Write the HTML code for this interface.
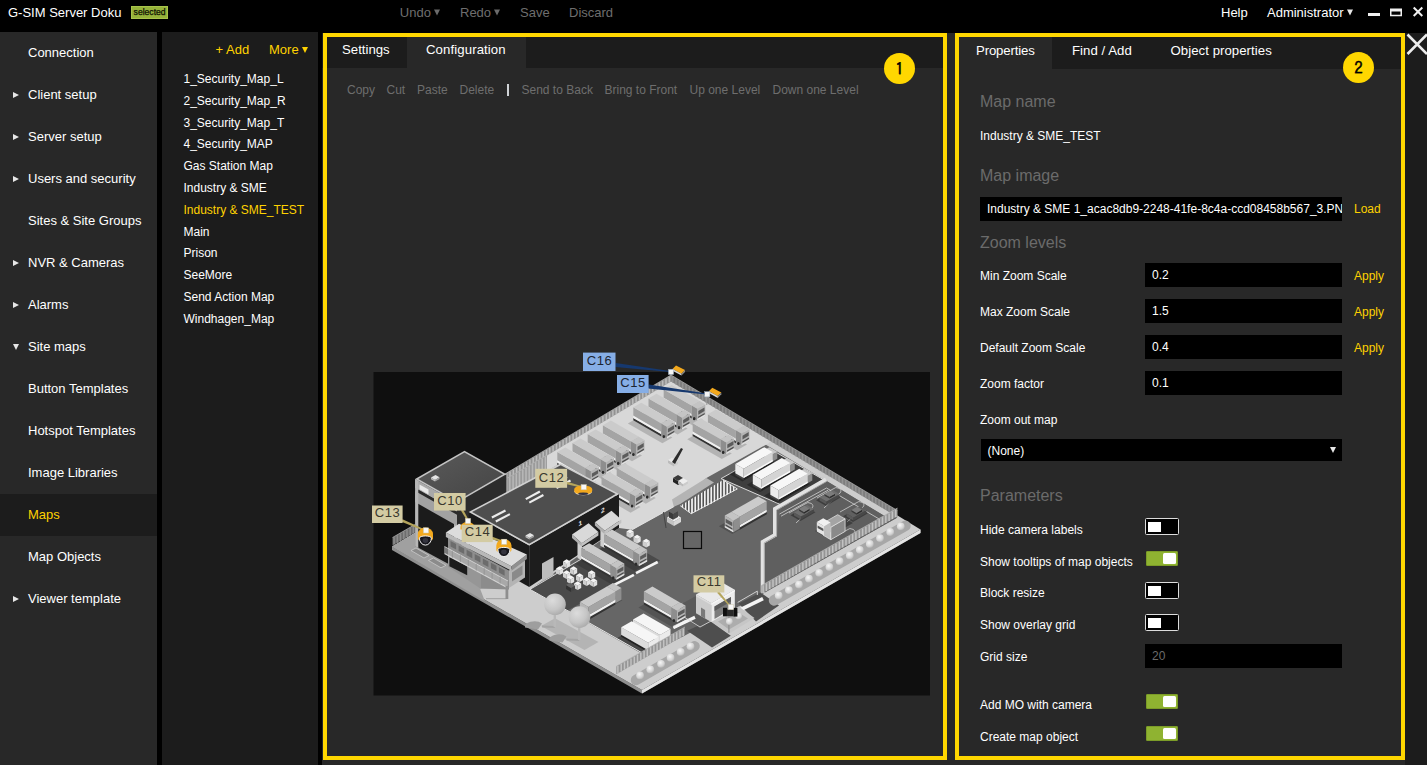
<!DOCTYPE html>
<html lang="en">
<head>
<meta charset="utf-8">
<title>G-SIM Server Doku</title>
<style>
*{box-sizing:border-box;margin:0;padding:0}
html,body{width:1427px;height:765px;overflow:hidden;background:#000}
body{font-family:"Liberation Sans",Arial,sans-serif;color:#fff;font-size:13px;position:relative}
.abs{position:absolute}
.t{position:absolute;white-space:nowrap;line-height:1}
#topbar{position:absolute;left:0;top:0;width:1427px;height:33px;background:#000}
#side{position:absolute;left:0;top:33px;width:157px;height:732px;background:#282828;box-shadow:0 -1px 0 #282828}
#list{position:absolute;left:162px;top:33px;width:155.5px;height:732px;background:#1c1c1c;box-shadow:0 -1px 0 #1c1c1c}
#center{position:absolute;left:322px;top:33px;width:633px;height:732px;background:#282828}
#right{position:absolute;left:955px;top:33px;width:450px;height:732px;background:#282828}
#far{position:absolute;left:1405px;top:33px;width:22px;height:732px;background:#1c1c1c}
.yb{position:absolute;border:4px solid #FFD700;pointer-events:none}
.nav{position:absolute;left:28px;font-size:13px;white-space:nowrap;line-height:16px;height:16px}
.arr{position:absolute;left:12px;width:0;height:0;border-style:solid}
.arr.r{border-width:3.5px 0 3.5px 6px;border-color:transparent transparent transparent #e6e6e6}
.arr.d{border-width:6px 3.5px 0 3.5px;border-color:#e6e6e6 transparent transparent transparent}
.li{position:absolute;left:183.5px;font-size:12px;white-space:nowrap;line-height:14px;height:14px}
.y{color:#FFD200}
.g{color:#6e6e6e}
.tab{position:absolute;font-size:13.2px;line-height:16px;white-space:nowrap}
.lbl{position:absolute;left:980px;font-size:12px;line-height:14px;white-space:nowrap}
.hd{position:absolute;left:980px;font-size:16px;line-height:18px;color:#6b6b6b;white-space:nowrap}
.inp{position:absolute;background:#000;font-size:12px;line-height:14px;color:#fff;white-space:nowrap;overflow:hidden}
.tog{position:absolute;left:1145px;width:34px;height:16px}
.circ{position:absolute;width:31px;height:31px;border-radius:50%;background:#FFD700;color:#000;font-family:"IPAGothic","Liberation Sans",sans-serif;font-size:17px;-webkit-text-stroke:.45px #000;text-align:center;line-height:31px}
</style>
</head>
<body>
<div id="topbar">
  <div class="t" style="left:8px;top:6px;font-size:13px">G-SIM Server Doku</div>
  <div class="abs" style="left:131px;top:6px;width:37px;height:13px;background:#96b23a;border:1px solid #a8c44a"></div>
  <div class="t" style="left:133.6px;top:7.5px;font-size:8.6px;color:#0c1002;-webkit-text-stroke:.25px #0c1002">selected</div>
  <div class="t g" style="left:399.8px;top:6px;font-size:13px">Undo</div>
  <div class="t g" style="left:460px;top:6px;font-size:13px">Redo</div>
  <div class="t g" style="left:520px;top:6px;font-size:13px">Save</div>
  <div class="t g" style="left:569px;top:6px;font-size:13px">Discard</div>
  <div class="t" style="left:1221px;top:6px;font-size:13px">Help</div>
  <div class="t" style="left:1267px;top:6px;font-size:13px">Administrator</div>
  <svg class="abs" style="left:0;top:0" width="1427" height="33" viewBox="0 0 1427 33">
    <polygon points="434,9.5 440,9.5 437,15.5" fill="#6b6b6b"/>
    <polygon points="494,9.5 500,9.5 497,15.5" fill="#6b6b6b"/>
    <polygon points="1347,9.5 1353,9.5 1350,15.5" fill="#e6e6e6"/>
    <rect x="1368" y="13" width="12" height="3" fill="#f0f0f0"/>
    <rect x="1390.75" y="10" width="10.5" height="5.5" fill="none" stroke="#f0f0f0" stroke-width="1.5"/>
    <rect x="1390" y="8.5" width="12" height="3" fill="#f0f0f0"/>
    <path d="M1413.7 7.5 L1422.3 16 M1422.3 7.5 L1413.7 16" stroke="#f0f0f0" stroke-width="2" fill="none"/>
  </svg>
</div>
<div id="side">
<div class="abs" style="left:0;top:461px;width:157px;height:42px;background:#1c1c1c"></div>
<div class="nav" style="top:11.8px">Connection</div>
<div class="nav" style="top:53.8px">Client setup</div>
<div class="arr r" style="top:59.1px;left:13px"></div>
<div class="nav" style="top:95.8px">Server setup</div>
<div class="arr r" style="top:101.1px;left:13px"></div>
<div class="nav" style="top:137.8px">Users and security</div>
<div class="arr r" style="top:143.1px;left:13px"></div>
<div class="nav" style="top:179.8px">Sites &amp; Site Groups</div>
<div class="nav" style="top:221.8px">NVR &amp; Cameras</div>
<div class="arr r" style="top:227.1px;left:13px"></div>
<div class="nav" style="top:263.8px">Alarms</div>
<div class="arr r" style="top:269.1px;left:13px"></div>
<div class="nav" style="top:305.8px">Site maps</div>
<div class="arr d" style="top:310.8px;left:12.8px"></div>
<div class="nav" style="top:347.8px">Button Templates</div>
<div class="nav" style="top:389.8px">Hotspot Templates</div>
<div class="nav" style="top:431.8px">Image Libraries</div>
<div class="nav y" style="top:473.8px">Maps</div>
<div class="nav" style="top:515.8px">Map Objects</div>
<div class="nav" style="top:557.8px">Viewer template</div>
<div class="arr r" style="top:563.1px;left:13px"></div>
</div>
<div id="list">
<div class="t y" style="left:53.5px;top:9.5px;font-size:13px">+ Add</div>
<div class="t y" style="left:107px;top:9.5px;font-size:13px">More</div>
<div class="arr d" style="left:140px;top:13.5px;border-width:6px 3px 0 3px;border-color:#FFD200 transparent transparent transparent"></div>
<div class="li" style="left:21.5px;top:39px">1_Security_Map_L</div>
<div class="li" style="left:21.5px;top:61px">2_Security_Map_R</div>
<div class="li" style="left:21.5px;top:83px">3_Security_Map_T</div>
<div class="li" style="left:21.5px;top:104px">4_Security_MAP</div>
<div class="li" style="left:21.5px;top:126px">Gas Station Map</div>
<div class="li" style="left:21.5px;top:148px">Industry &amp; SME</div>
<div class="li y" style="left:21.5px;top:170px">Industry &amp; SME_TEST</div>
<div class="li" style="left:21.5px;top:192px">Main</div>
<div class="li" style="left:21.5px;top:213px">Prison</div>
<div class="li" style="left:21.5px;top:235px">SeeMore</div>
<div class="li" style="left:21.5px;top:257px">Send Action Map</div>
<div class="li" style="left:21.5px;top:279px">Windhagen_Map</div>
</div>
<div id="center">
  <div class="abs" style="left:0;top:0;width:625px;height:35px;background:#1c1c1c"></div>
  <div class="abs" style="left:85px;top:0;width:119px;height:35px;background:#282828"></div>
  <div class="tab" style="left:20px;top:9px">Settings</div>
  <div class="tab" style="left:104px;top:9px;letter-spacing:.1px">Configuration</div>
  <div class="lbl g" style="left:25px;top:50px">Copy</div>
  <div class="lbl g" style="left:64.5px;top:50px">Cut</div>
  <div class="lbl g" style="left:95px;top:50px">Paste</div>
  <div class="lbl g" style="left:137.5px;top:50px">Delete</div>
  <div class="abs" style="left:184.5px;top:51px;width:2px;height:12px;background:#cfd3d6"></div>
  <div class="lbl g" style="left:199.5px;top:50px">Send to Back</div>
  <div class="lbl g" style="left:282.5px;top:50px">Bring to Front</div>
  <div class="lbl g" style="left:367.5px;top:50px">Up one Level</div>
  <div class="lbl g" style="left:450.5px;top:50px">Down one Level</div>
  <!--MAPSTART--><svg class="abs" style="left:38px;top:307px" width="580" height="365" viewBox="360 340 580 365">
<defs>
<radialGradient id="sph" cx=".4" cy=".35" r=".75"><stop offset="0" stop-color="#f6f6f6"/><stop offset=".6" stop-color="#d4d4d4"/><stop offset="1" stop-color="#a8a8a8"/></radialGradient>
<radialGradient id="sph2" cx=".38" cy=".32" r=".8"><stop offset="0" stop-color="#dcdcdc"/><stop offset=".55" stop-color="#c6c6c6"/><stop offset="1" stop-color="#a2a2a2"/></radialGradient>
<linearGradient id="roofg" x1="0" y1="0" x2="1" y2="1"><stop offset="0" stop-color="#5a5a5a"/><stop offset="1" stop-color="#444"/></linearGradient>
<pattern id="hatch" width="3.2" height="10" patternUnits="userSpaceOnUse"><rect width="3.2" height="10" fill="#4c4c4c"/><rect width="1.7" height="10" fill="#f2f2f2"/></pattern>
</defs>
<rect x="373.5" y="372" width="556.5" height="323.5" fill="#0f0f0f"/>
<polygon points="392.0,546.5 642.0,690.0 920.5,529.5 920.5,533.0 642.0,693.5 392.0,550.0" fill="#8f8f8f"/>
<polygon points="642.0,690.0 920.5,529.5 920.5,533.0 642.0,693.5" fill="#e4e4e4"/>
<polygon points="392.0,546.5 671.0,377.5 920.5,529.5 642.0,690.0" fill="#cdcdcd"/>
<polygon points="392.0,546.5 415.0,533.0 448.0,552.0 509.0,588.0 480.0,588.4 485.0,601.5 499.0,609.5" fill="#a0a0a0"/>
<polygon points="530.0,589.4 619.0,528.0 671.0,388.0 771.0,447.8 883.3,515.3 897.4,517.5 761.4,594.5 685.0,635.5 645.0,655.5" fill="#666666"/>
<polygon points="671.0,381.0 771.0,440.0 768.7,443.2 706.4,478.1 673.8,506.7 632.2,529.7 619.0,528.0 560.0,496.0 505.0,480.0 505.0,474.0" fill="#d8d8d8"/>
<polygon points="672.0,499.5 706.4,478.1 714.0,482.5 680.2,504.1 673.8,506.7" fill="#b4b4b4"/>
<polygon points="530.0,589.4 619.0,537.0 660.0,560.5 567.4,610.5" fill="#4a4a4a"/>
<polygon points="721.1,478.6 772.0,450.0 824.1,480.0 781.5,505.0" fill="#3e3e3e" stroke="#e8e8e8" stroke-width="0.9"/>
<polygon points="700.0,493.8 723.0,480.0 737.3,488.9 711.8,503.6 691.2,513.7 680.2,505.7" fill="url(#hatch)"/>
<polyline points="680.2,505.7 691.2,513.7 737.3,488.9 723.0,480.0" fill="none" stroke="#f0f0f0" stroke-width=".9"/>
<polygon points="781.5,505.0 825.9,480.5 883.3,515.3 897.4,517.5 765.0,592.0 765.0,543.0 777.0,536.0" fill="#5f5f5f"/>
<line x1="779.5" y1="514.0" x2="826.5" y2="488.0" stroke="#d4d4d4" stroke-width="0.8" />
<line x1="781.0" y1="516.2" x2="828.0" y2="490.2" stroke="#d4d4d4" stroke-width="0.8" />
<line x1="826.5" y1="488.0" x2="880.0" y2="519.5" stroke="#d4d4d4" stroke-width="0.8" />
<path d="M789.0 513.0 L805.0 504.0 a4 3 0 0 1 7 4 L796.0 523.0" fill="none" stroke="#cfcfcf" stroke-width="0.8"/>
<path d="M817.0 498.0 L833.0 489.0 a4 3 0 0 1 7 4 L824.0 508.0" fill="none" stroke="#cfcfcf" stroke-width="0.8"/>
<path d="M840.0 512.0 L856.0 503.0 a4 3 0 0 1 7 4 L847.0 522.0" fill="none" stroke="#cfcfcf" stroke-width="0.8"/>
<path d="M831.0 539.0 L847.0 530.0 a4 3 0 0 1 7 4 L838.0 549.0" fill="none" stroke="#cfcfcf" stroke-width="0.8"/>
<polyline points="826.0,479.6 775.0,508.9 775.0,535.0 762.7,542.0 762.7,593.0" fill="none" stroke="#e2e2e2" stroke-width="4" stroke-linejoin="miter"/>
<polyline points="827.4,481.0 776.6,510.0 776.6,535.8 764.3,542.8 764.3,592.4" fill="none" stroke="#a2a2a2" stroke-width="0.9"/>
<line x1="632.2" y1="529.7" x2="673.8" y2="506.7" stroke="#e6e6e6" stroke-width="0.9" />
<line x1="530.0" y1="589.4" x2="583.0" y2="558.0" stroke="#e0e0e0" stroke-width="0.9" />
<line x1="612.6" y1="585.6" x2="633.9" y2="574.9" stroke="#f4f4f4" stroke-width="2.6" />
<line x1="636.0" y1="573.2" x2="657.7" y2="562.0" stroke="#f4f4f4" stroke-width="2.6" />
<line x1="673.3" y1="627.7" x2="695.9" y2="616.5" stroke="#f4f4f4" stroke-width="2.6" />
<line x1="743.0" y1="609.0" x2="760.0" y2="601.0" stroke="#f4f4f4" stroke-width="2.6" />
<polygon points="687.2,630.8 709.3,620.5 730.8,635.8 712.0,647.5" fill="#4e4e4e"/>
<polygon points="738.7,603.4 760.5,592.5 779.0,605.5 756.0,621.5" fill="#4e4e4e"/>
<polygon points="682.3,603.4 696.0,596.0 696.0,613.5 711.2,621.0 700.0,628.0 672.0,611.0" fill="#5a5a5a"/>
<line x1="673.5" y1="627.5" x2="695.0" y2="617.3" stroke="#f4f4f4" stroke-width="3.2" />
<line x1="741.5" y1="609.2" x2="763.0" y2="598.6" stroke="#f4f4f4" stroke-width="3.6" />
<polyline points="682.3,603.4 672.0,609.5 700.0,627.0 711.2,621.0" fill="none" stroke="#e0e0e0" stroke-width=".8"/>
<polygon points="711.2,621.0 738.7,606.5 754.5,618.0 728.9,633.8" fill="#c6c6c6"/>
<polygon points="718.0,621.5 737.0,611.5 748.0,618.5 729.0,629.5" fill="#adadad"/>
<polygon points="505.0,480.5 671.0,381.5 671.0,375.0 505.0,474.0" fill="#929292"/>
<line x1="506.7" y1="479.5" x2="506.7" y2="473.6" stroke="#bcbcbc" stroke-width="1.5" />
<line x1="510.0" y1="477.5" x2="510.0" y2="471.6" stroke="#bcbcbc" stroke-width="1.5" />
<line x1="513.3" y1="475.6" x2="513.3" y2="469.7" stroke="#bcbcbc" stroke-width="1.5" />
<line x1="516.6" y1="473.6" x2="516.6" y2="467.7" stroke="#bcbcbc" stroke-width="1.5" />
<line x1="519.9" y1="471.6" x2="519.9" y2="465.7" stroke="#bcbcbc" stroke-width="1.5" />
<line x1="523.3" y1="469.6" x2="523.3" y2="463.7" stroke="#bcbcbc" stroke-width="1.5" />
<line x1="526.6" y1="467.6" x2="526.6" y2="461.7" stroke="#bcbcbc" stroke-width="1.5" />
<line x1="529.9" y1="465.6" x2="529.9" y2="459.8" stroke="#bcbcbc" stroke-width="1.5" />
<line x1="533.2" y1="463.7" x2="533.2" y2="457.8" stroke="#bcbcbc" stroke-width="1.5" />
<line x1="536.5" y1="461.7" x2="536.5" y2="455.8" stroke="#bcbcbc" stroke-width="1.5" />
<line x1="539.9" y1="459.7" x2="539.9" y2="453.8" stroke="#bcbcbc" stroke-width="1.5" />
<line x1="543.2" y1="457.7" x2="543.2" y2="451.8" stroke="#bcbcbc" stroke-width="1.5" />
<line x1="546.5" y1="455.8" x2="546.5" y2="449.9" stroke="#bcbcbc" stroke-width="1.5" />
<line x1="549.8" y1="453.8" x2="549.8" y2="447.9" stroke="#bcbcbc" stroke-width="1.5" />
<line x1="553.1" y1="451.8" x2="553.1" y2="445.9" stroke="#bcbcbc" stroke-width="1.5" />
<line x1="556.5" y1="449.8" x2="556.5" y2="443.9" stroke="#bcbcbc" stroke-width="1.5" />
<line x1="559.8" y1="447.8" x2="559.8" y2="441.9" stroke="#bcbcbc" stroke-width="1.5" />
<line x1="563.1" y1="445.9" x2="563.1" y2="440.0" stroke="#bcbcbc" stroke-width="1.5" />
<line x1="566.4" y1="443.9" x2="566.4" y2="438.0" stroke="#bcbcbc" stroke-width="1.5" />
<line x1="569.7" y1="441.9" x2="569.7" y2="436.0" stroke="#bcbcbc" stroke-width="1.5" />
<line x1="573.1" y1="439.9" x2="573.1" y2="434.0" stroke="#bcbcbc" stroke-width="1.5" />
<line x1="576.4" y1="437.9" x2="576.4" y2="432.0" stroke="#bcbcbc" stroke-width="1.5" />
<line x1="579.7" y1="435.9" x2="579.7" y2="430.1" stroke="#bcbcbc" stroke-width="1.5" />
<line x1="583.0" y1="434.0" x2="583.0" y2="428.1" stroke="#bcbcbc" stroke-width="1.5" />
<line x1="586.3" y1="432.0" x2="586.3" y2="426.1" stroke="#bcbcbc" stroke-width="1.5" />
<line x1="589.7" y1="430.0" x2="589.7" y2="424.1" stroke="#bcbcbc" stroke-width="1.5" />
<line x1="593.0" y1="428.0" x2="593.0" y2="422.1" stroke="#bcbcbc" stroke-width="1.5" />
<line x1="596.3" y1="426.1" x2="596.3" y2="420.2" stroke="#bcbcbc" stroke-width="1.5" />
<line x1="599.6" y1="424.1" x2="599.6" y2="418.2" stroke="#bcbcbc" stroke-width="1.5" />
<line x1="602.9" y1="422.1" x2="602.9" y2="416.2" stroke="#bcbcbc" stroke-width="1.5" />
<line x1="606.3" y1="420.1" x2="606.3" y2="414.2" stroke="#bcbcbc" stroke-width="1.5" />
<line x1="609.6" y1="418.1" x2="609.6" y2="412.2" stroke="#bcbcbc" stroke-width="1.5" />
<line x1="612.9" y1="416.1" x2="612.9" y2="410.2" stroke="#bcbcbc" stroke-width="1.5" />
<line x1="616.2" y1="414.2" x2="616.2" y2="408.3" stroke="#bcbcbc" stroke-width="1.5" />
<line x1="619.5" y1="412.2" x2="619.5" y2="406.3" stroke="#bcbcbc" stroke-width="1.5" />
<line x1="622.9" y1="410.2" x2="622.9" y2="404.3" stroke="#bcbcbc" stroke-width="1.5" />
<line x1="626.2" y1="408.2" x2="626.2" y2="402.3" stroke="#bcbcbc" stroke-width="1.5" />
<line x1="629.5" y1="406.2" x2="629.5" y2="400.4" stroke="#bcbcbc" stroke-width="1.5" />
<line x1="632.8" y1="404.3" x2="632.8" y2="398.4" stroke="#bcbcbc" stroke-width="1.5" />
<line x1="636.1" y1="402.3" x2="636.1" y2="396.4" stroke="#bcbcbc" stroke-width="1.5" />
<line x1="639.5" y1="400.3" x2="639.5" y2="394.4" stroke="#bcbcbc" stroke-width="1.5" />
<line x1="642.8" y1="398.3" x2="642.8" y2="392.4" stroke="#bcbcbc" stroke-width="1.5" />
<line x1="646.1" y1="396.4" x2="646.1" y2="390.5" stroke="#bcbcbc" stroke-width="1.5" />
<line x1="649.4" y1="394.4" x2="649.4" y2="388.5" stroke="#bcbcbc" stroke-width="1.5" />
<line x1="652.7" y1="392.4" x2="652.7" y2="386.5" stroke="#bcbcbc" stroke-width="1.5" />
<line x1="656.1" y1="390.4" x2="656.1" y2="384.5" stroke="#bcbcbc" stroke-width="1.5" />
<line x1="659.4" y1="388.4" x2="659.4" y2="382.5" stroke="#bcbcbc" stroke-width="1.5" />
<line x1="662.7" y1="386.4" x2="662.7" y2="380.6" stroke="#bcbcbc" stroke-width="1.5" />
<line x1="666.0" y1="384.5" x2="666.0" y2="378.6" stroke="#bcbcbc" stroke-width="1.5" />
<line x1="669.3" y1="382.5" x2="669.3" y2="376.6" stroke="#bcbcbc" stroke-width="1.5" />
<line x1="505.0" y1="474.0" x2="671.0" y2="375.0" stroke="#b8b8b8" stroke-width="0.7" />
<polygon points="671.0,381.5 897.4,517.0 897.4,510.5 671.0,375.0" fill="#7e7e7e"/>
<line x1="672.7" y1="382.5" x2="672.7" y2="376.6" stroke="#949494" stroke-width="1.5" />
<line x1="676.0" y1="384.5" x2="676.0" y2="378.6" stroke="#949494" stroke-width="1.5" />
<line x1="679.3" y1="386.5" x2="679.3" y2="380.6" stroke="#949494" stroke-width="1.5" />
<line x1="682.7" y1="388.5" x2="682.7" y2="382.6" stroke="#949494" stroke-width="1.5" />
<line x1="686.0" y1="390.5" x2="686.0" y2="384.6" stroke="#949494" stroke-width="1.5" />
<line x1="689.3" y1="392.5" x2="689.3" y2="386.6" stroke="#949494" stroke-width="1.5" />
<line x1="692.6" y1="394.5" x2="692.6" y2="388.6" stroke="#949494" stroke-width="1.5" />
<line x1="696.0" y1="396.4" x2="696.0" y2="390.5" stroke="#949494" stroke-width="1.5" />
<line x1="699.3" y1="398.4" x2="699.3" y2="392.5" stroke="#949494" stroke-width="1.5" />
<line x1="702.6" y1="400.4" x2="702.6" y2="394.5" stroke="#949494" stroke-width="1.5" />
<line x1="706.0" y1="402.4" x2="706.0" y2="396.5" stroke="#949494" stroke-width="1.5" />
<line x1="709.3" y1="404.4" x2="709.3" y2="398.5" stroke="#949494" stroke-width="1.5" />
<line x1="712.6" y1="406.4" x2="712.6" y2="400.5" stroke="#949494" stroke-width="1.5" />
<line x1="715.9" y1="408.4" x2="715.9" y2="402.5" stroke="#949494" stroke-width="1.5" />
<line x1="719.3" y1="410.4" x2="719.3" y2="404.5" stroke="#949494" stroke-width="1.5" />
<line x1="722.6" y1="412.4" x2="722.6" y2="406.5" stroke="#949494" stroke-width="1.5" />
<line x1="725.9" y1="414.4" x2="725.9" y2="408.5" stroke="#949494" stroke-width="1.5" />
<line x1="729.3" y1="416.4" x2="729.3" y2="410.5" stroke="#949494" stroke-width="1.5" />
<line x1="732.6" y1="418.4" x2="732.6" y2="412.5" stroke="#949494" stroke-width="1.5" />
<line x1="735.9" y1="420.4" x2="735.9" y2="414.5" stroke="#949494" stroke-width="1.5" />
<line x1="739.3" y1="422.3" x2="739.3" y2="416.4" stroke="#949494" stroke-width="1.5" />
<line x1="742.6" y1="424.3" x2="742.6" y2="418.4" stroke="#949494" stroke-width="1.5" />
<line x1="745.9" y1="426.3" x2="745.9" y2="420.4" stroke="#949494" stroke-width="1.5" />
<line x1="749.2" y1="428.3" x2="749.2" y2="422.4" stroke="#949494" stroke-width="1.5" />
<line x1="752.6" y1="430.3" x2="752.6" y2="424.4" stroke="#949494" stroke-width="1.5" />
<line x1="755.9" y1="432.3" x2="755.9" y2="426.4" stroke="#949494" stroke-width="1.5" />
<line x1="759.2" y1="434.3" x2="759.2" y2="428.4" stroke="#949494" stroke-width="1.5" />
<line x1="762.6" y1="436.3" x2="762.6" y2="430.4" stroke="#949494" stroke-width="1.5" />
<line x1="765.9" y1="438.3" x2="765.9" y2="432.4" stroke="#949494" stroke-width="1.5" />
<line x1="769.2" y1="440.3" x2="769.2" y2="434.4" stroke="#949494" stroke-width="1.5" />
<line x1="772.5" y1="442.3" x2="772.5" y2="436.4" stroke="#949494" stroke-width="1.5" />
<line x1="775.9" y1="444.3" x2="775.9" y2="438.4" stroke="#949494" stroke-width="1.5" />
<line x1="779.2" y1="446.3" x2="779.2" y2="440.4" stroke="#949494" stroke-width="1.5" />
<line x1="782.5" y1="448.3" x2="782.5" y2="442.4" stroke="#949494" stroke-width="1.5" />
<line x1="785.9" y1="450.2" x2="785.9" y2="444.3" stroke="#949494" stroke-width="1.5" />
<line x1="789.2" y1="452.2" x2="789.2" y2="446.3" stroke="#949494" stroke-width="1.5" />
<line x1="792.5" y1="454.2" x2="792.5" y2="448.3" stroke="#949494" stroke-width="1.5" />
<line x1="795.9" y1="456.2" x2="795.9" y2="450.3" stroke="#949494" stroke-width="1.5" />
<line x1="799.2" y1="458.2" x2="799.2" y2="452.3" stroke="#949494" stroke-width="1.5" />
<line x1="802.5" y1="460.2" x2="802.5" y2="454.3" stroke="#949494" stroke-width="1.5" />
<line x1="805.8" y1="462.2" x2="805.8" y2="456.3" stroke="#949494" stroke-width="1.5" />
<line x1="809.2" y1="464.2" x2="809.2" y2="458.3" stroke="#949494" stroke-width="1.5" />
<line x1="812.5" y1="466.2" x2="812.5" y2="460.3" stroke="#949494" stroke-width="1.5" />
<line x1="815.8" y1="468.2" x2="815.8" y2="462.3" stroke="#949494" stroke-width="1.5" />
<line x1="819.2" y1="470.2" x2="819.2" y2="464.3" stroke="#949494" stroke-width="1.5" />
<line x1="822.5" y1="472.2" x2="822.5" y2="466.3" stroke="#949494" stroke-width="1.5" />
<line x1="825.8" y1="474.2" x2="825.8" y2="468.3" stroke="#949494" stroke-width="1.5" />
<line x1="829.1" y1="476.2" x2="829.1" y2="470.3" stroke="#949494" stroke-width="1.5" />
<line x1="832.5" y1="478.1" x2="832.5" y2="472.2" stroke="#949494" stroke-width="1.5" />
<line x1="835.8" y1="480.1" x2="835.8" y2="474.2" stroke="#949494" stroke-width="1.5" />
<line x1="839.1" y1="482.1" x2="839.1" y2="476.2" stroke="#949494" stroke-width="1.5" />
<line x1="842.5" y1="484.1" x2="842.5" y2="478.2" stroke="#949494" stroke-width="1.5" />
<line x1="845.8" y1="486.1" x2="845.8" y2="480.2" stroke="#949494" stroke-width="1.5" />
<line x1="849.1" y1="488.1" x2="849.1" y2="482.2" stroke="#949494" stroke-width="1.5" />
<line x1="852.5" y1="490.1" x2="852.5" y2="484.2" stroke="#949494" stroke-width="1.5" />
<line x1="855.8" y1="492.1" x2="855.8" y2="486.2" stroke="#949494" stroke-width="1.5" />
<line x1="859.1" y1="494.1" x2="859.1" y2="488.2" stroke="#949494" stroke-width="1.5" />
<line x1="862.4" y1="496.1" x2="862.4" y2="490.2" stroke="#949494" stroke-width="1.5" />
<line x1="865.8" y1="498.1" x2="865.8" y2="492.2" stroke="#949494" stroke-width="1.5" />
<line x1="869.1" y1="500.1" x2="869.1" y2="494.2" stroke="#949494" stroke-width="1.5" />
<line x1="872.4" y1="502.1" x2="872.4" y2="496.2" stroke="#949494" stroke-width="1.5" />
<line x1="875.8" y1="504.0" x2="875.8" y2="498.1" stroke="#949494" stroke-width="1.5" />
<line x1="879.1" y1="506.0" x2="879.1" y2="500.1" stroke="#949494" stroke-width="1.5" />
<line x1="882.4" y1="508.0" x2="882.4" y2="502.1" stroke="#949494" stroke-width="1.5" />
<line x1="885.7" y1="510.0" x2="885.7" y2="504.1" stroke="#949494" stroke-width="1.5" />
<line x1="889.1" y1="512.0" x2="889.1" y2="506.1" stroke="#949494" stroke-width="1.5" />
<line x1="892.4" y1="514.0" x2="892.4" y2="508.1" stroke="#949494" stroke-width="1.5" />
<line x1="895.7" y1="516.0" x2="895.7" y2="510.1" stroke="#949494" stroke-width="1.5" />
<line x1="671.0" y1="375.0" x2="897.4" y2="510.5" stroke="#b8b8b8" stroke-width="0.7" />
<polygon points="505.0,495.0 547.0,470.5 547.0,455.0 505.0,479.5" fill="#9a9a9a"/>
<line x1="506.6" y1="494.1" x2="506.6" y2="479.2" stroke="#b8b8b8" stroke-width="1.5" />
<line x1="509.8" y1="492.2" x2="509.8" y2="477.3" stroke="#b8b8b8" stroke-width="1.5" />
<line x1="513.1" y1="490.3" x2="513.1" y2="475.4" stroke="#b8b8b8" stroke-width="1.5" />
<line x1="516.3" y1="488.4" x2="516.3" y2="473.5" stroke="#b8b8b8" stroke-width="1.5" />
<line x1="519.5" y1="486.5" x2="519.5" y2="471.6" stroke="#b8b8b8" stroke-width="1.5" />
<line x1="522.8" y1="484.6" x2="522.8" y2="469.7" stroke="#b8b8b8" stroke-width="1.5" />
<line x1="526.0" y1="482.8" x2="526.0" y2="467.9" stroke="#b8b8b8" stroke-width="1.5" />
<line x1="529.2" y1="480.9" x2="529.2" y2="466.0" stroke="#b8b8b8" stroke-width="1.5" />
<line x1="532.5" y1="479.0" x2="532.5" y2="464.1" stroke="#b8b8b8" stroke-width="1.5" />
<line x1="535.7" y1="477.1" x2="535.7" y2="462.2" stroke="#b8b8b8" stroke-width="1.5" />
<line x1="538.9" y1="475.2" x2="538.9" y2="460.3" stroke="#b8b8b8" stroke-width="1.5" />
<line x1="542.2" y1="473.3" x2="542.2" y2="458.4" stroke="#b8b8b8" stroke-width="1.5" />
<line x1="545.4" y1="471.4" x2="545.4" y2="456.5" stroke="#b8b8b8" stroke-width="1.5" />
<line x1="505.0" y1="479.5" x2="547.0" y2="455.0" stroke="#b8b8b8" stroke-width="0.7" />
<polygon points="392.5,545.5 415.0,532.5 415.0,524.5 392.5,537.5" fill="#6e6e6e"/>
<line x1="394.1" y1="544.6" x2="394.1" y2="537.2" stroke="#8c8c8c" stroke-width="1.5" />
<line x1="397.3" y1="542.7" x2="397.3" y2="535.3" stroke="#8c8c8c" stroke-width="1.5" />
<line x1="400.5" y1="540.9" x2="400.5" y2="533.5" stroke="#8c8c8c" stroke-width="1.5" />
<line x1="403.8" y1="539.0" x2="403.8" y2="531.6" stroke="#8c8c8c" stroke-width="1.5" />
<line x1="407.0" y1="537.1" x2="407.0" y2="529.7" stroke="#8c8c8c" stroke-width="1.5" />
<line x1="410.2" y1="535.3" x2="410.2" y2="527.9" stroke="#8c8c8c" stroke-width="1.5" />
<line x1="413.4" y1="533.4" x2="413.4" y2="526.0" stroke="#8c8c8c" stroke-width="1.5" />
<line x1="392.5" y1="537.5" x2="415.0" y2="524.5" stroke="#b8b8b8" stroke-width="0.7" />
<polygon points="658.2,405.6 692.8,425.4 702.8,419.7 668.2,399.8" fill="#000" opacity="0.17"/>
<polygon points="663.7,402.4 691.7,418.5 691.7,416.1 663.7,400.0" fill="#333"/>
<polygon points="663.7,400.2 691.7,416.3 691.7,413.7 663.7,397.6" fill="#f0f0f0"/>
<polygon points="663.7,397.8 691.7,413.9 691.7,405.6 663.7,389.5" fill="#a4a4a4"/>
<polygon points="691.7,413.9 699.7,409.3 699.7,401.0 691.7,405.6" fill="#b6b6b6"/>
<polygon points="663.7,389.5 691.7,405.6 699.7,401.0 671.7,384.9" fill="#cbcbcb"/>
<polygon points="691.7,417.3 697.3,420.5 697.3,408.8 691.7,405.6" fill="#8e8e8e"/>
<polygon points="697.3,420.5 705.3,415.9 705.3,404.2 697.3,408.8" fill="#b4b4b4"/>
<polygon points="691.7,405.6 697.3,408.8 705.3,404.2 699.7,401.0" fill="#c4c4c4"/>
<polygon points="698.3,411.0 704.5,407.4 704.5,411.1 698.3,414.7" fill="#5c5c5c"/>
<polygon points="698.1,416.7 704.7,412.9 704.7,414.3 698.1,418.1" fill="#4a4a4a"/>
<polygon points="697.3,419.1 705.3,414.5 705.3,415.9 697.3,420.5" fill="#e4e4e4"/>
<ellipse cx="694.2" cy="418.7" rx="1.3" ry="1.6" fill="#2a2a2a"/>
<polygon points="643.0,414.5 677.6,434.4 687.6,428.6 653.0,408.7" fill="#000" opacity="0.17"/>
<polygon points="648.5,411.3 676.5,427.4 676.5,425.0 648.5,408.9" fill="#333"/>
<polygon points="648.5,409.1 676.5,425.2 676.5,422.6 648.5,406.5" fill="#f0f0f0"/>
<polygon points="648.5,406.7 676.5,422.8 676.5,414.5 648.5,398.4" fill="#a4a4a4"/>
<polygon points="676.5,422.8 684.5,418.2 684.5,409.9 676.5,414.5" fill="#b6b6b6"/>
<polygon points="648.5,398.4 676.5,414.5 684.5,409.9 656.5,393.8" fill="#cbcbcb"/>
<polygon points="676.5,426.2 682.1,429.4 682.1,417.7 676.5,414.5" fill="#8e8e8e"/>
<polygon points="682.1,429.4 690.1,424.8 690.1,413.1 682.1,417.7" fill="#b4b4b4"/>
<polygon points="676.5,414.5 682.1,417.7 690.1,413.1 684.5,409.9" fill="#c4c4c4"/>
<polygon points="683.1,419.9 689.3,416.3 689.3,420.0 683.1,423.6" fill="#5c5c5c"/>
<polygon points="682.9,425.6 689.5,421.8 689.5,423.2 682.9,427.0" fill="#4a4a4a"/>
<polygon points="682.1,428.0 690.1,423.4 690.1,424.8 682.1,429.4" fill="#e4e4e4"/>
<ellipse cx="679.0" cy="427.7" rx="1.3" ry="1.6" fill="#2a2a2a"/>
<polygon points="627.8,423.4 662.4,443.3 672.4,437.6 637.8,417.7" fill="#000" opacity="0.17"/>
<polygon points="633.3,420.2 661.3,436.4 661.3,434.0 633.3,417.9" fill="#333"/>
<polygon points="633.3,418.1 661.3,434.2 661.3,431.6 633.3,415.4" fill="#f0f0f0"/>
<polygon points="633.3,415.6 661.3,431.8 661.3,423.4 633.3,407.3" fill="#a4a4a4"/>
<polygon points="661.3,431.8 669.3,427.1 669.3,418.8 661.3,423.4" fill="#b6b6b6"/>
<polygon points="633.3,407.3 661.3,423.4 669.3,418.8 641.3,402.7" fill="#cbcbcb"/>
<polygon points="661.3,435.2 666.9,438.4 666.9,426.7 661.3,423.5" fill="#8e8e8e"/>
<polygon points="666.9,438.4 674.9,433.8 674.9,422.1 666.9,426.7" fill="#b4b4b4"/>
<polygon points="661.3,423.5 666.9,426.7 674.9,422.1 669.3,418.9" fill="#c4c4c4"/>
<polygon points="667.9,428.8 674.1,425.2 674.1,428.9 667.9,432.5" fill="#5c5c5c"/>
<polygon points="667.7,434.5 674.3,430.7 674.3,432.1 667.7,435.9" fill="#4a4a4a"/>
<polygon points="666.9,437.0 674.9,432.4 674.9,433.8 666.9,438.4" fill="#e4e4e4"/>
<ellipse cx="663.8" cy="436.6" rx="1.3" ry="1.6" fill="#2a2a2a"/>
<polygon points="597.4,441.3 632.0,461.2 642.0,455.4 607.4,435.5" fill="#000" opacity="0.17"/>
<polygon points="602.9,438.1 630.9,454.2 630.9,451.8 602.9,435.7" fill="#333"/>
<polygon points="602.9,435.9 630.9,452.0 630.9,449.4 602.9,433.3" fill="#f0f0f0"/>
<polygon points="602.9,433.5 630.9,449.6 630.9,441.3 602.9,425.2" fill="#a4a4a4"/>
<polygon points="630.9,449.6 638.9,445.0 638.9,436.7 630.9,441.3" fill="#b6b6b6"/>
<polygon points="602.9,425.2 630.9,441.3 638.9,436.7 610.9,420.6" fill="#cbcbcb"/>
<polygon points="630.9,453.0 636.5,456.2 636.5,444.5 630.9,441.3" fill="#8e8e8e"/>
<polygon points="636.5,456.2 644.5,451.6 644.5,439.9 636.5,444.5" fill="#b4b4b4"/>
<polygon points="630.9,441.3 636.5,444.5 644.5,439.9 638.9,436.7" fill="#c4c4c4"/>
<polygon points="637.5,446.7 643.7,443.1 643.7,446.8 637.5,450.4" fill="#5c5c5c"/>
<polygon points="637.3,452.4 643.9,448.6 643.9,450.0 637.3,453.8" fill="#4a4a4a"/>
<polygon points="636.5,454.8 644.5,450.2 644.5,451.6 636.5,456.2" fill="#e4e4e4"/>
<ellipse cx="633.4" cy="454.5" rx="1.3" ry="1.6" fill="#2a2a2a"/>
<polygon points="582.2,450.2 616.8,470.1 626.8,464.3 592.2,444.5" fill="#000" opacity="0.17"/>
<polygon points="587.7,447.0 615.7,463.1 615.7,460.7 587.7,444.6" fill="#333"/>
<polygon points="587.7,444.8 615.7,460.9 615.7,458.3 587.7,442.2" fill="#f0f0f0"/>
<polygon points="587.7,442.4 615.7,458.5 615.7,450.2 587.7,434.1" fill="#a4a4a4"/>
<polygon points="615.7,458.5 623.7,453.9 623.7,445.6 615.7,450.2" fill="#b6b6b6"/>
<polygon points="587.7,434.1 615.7,450.2 623.7,445.6 595.7,429.5" fill="#cbcbcb"/>
<polygon points="615.7,461.9 621.3,465.2 621.3,453.5 615.7,450.2" fill="#8e8e8e"/>
<polygon points="621.3,465.2 629.3,460.6 629.3,448.9 621.3,453.5" fill="#b4b4b4"/>
<polygon points="615.7,450.2 621.3,453.5 629.3,448.9 623.7,445.6" fill="#c4c4c4"/>
<polygon points="622.3,455.6 628.5,452.0 628.5,455.7 622.3,459.3" fill="#5c5c5c"/>
<polygon points="622.1,461.3 628.7,457.5 628.7,458.9 622.1,462.7" fill="#4a4a4a"/>
<polygon points="621.3,463.8 629.3,459.2 629.3,460.6 621.3,465.2" fill="#e4e4e4"/>
<ellipse cx="618.2" cy="463.4" rx="1.3" ry="1.6" fill="#2a2a2a"/>
<polygon points="567.0,459.1 601.6,479.0 611.6,473.3 577.0,453.4" fill="#000" opacity="0.17"/>
<polygon points="572.5,456.0 600.5,472.1 600.5,469.7 572.5,453.6" fill="#333"/>
<polygon points="572.5,453.8 600.5,469.9 600.5,467.3 572.5,451.2" fill="#f0f0f0"/>
<polygon points="572.5,451.4 600.5,467.5 600.5,459.2 572.5,443.1" fill="#a4a4a4"/>
<polygon points="600.5,467.5 608.5,462.9 608.5,454.6 600.5,459.2" fill="#b6b6b6"/>
<polygon points="572.5,443.1 600.5,459.2 608.5,454.6 580.5,438.5" fill="#cbcbcb"/>
<polygon points="600.5,470.9 606.1,474.1 606.1,462.4 600.5,459.2" fill="#8e8e8e"/>
<polygon points="606.1,474.1 614.1,469.5 614.1,457.8 606.1,462.4" fill="#b4b4b4"/>
<polygon points="600.5,459.2 606.1,462.4 614.1,457.8 608.5,454.6" fill="#c4c4c4"/>
<polygon points="607.1,464.5 613.3,460.9 613.3,464.6 607.1,468.2" fill="#5c5c5c"/>
<polygon points="606.9,470.2 613.5,466.5 613.5,467.9 606.9,471.6" fill="#4a4a4a"/>
<polygon points="606.1,472.7 614.1,468.1 614.1,469.5 606.1,474.1" fill="#e4e4e4"/>
<ellipse cx="603.0" cy="472.3" rx="1.3" ry="1.6" fill="#2a2a2a"/>
<polygon points="551.8,468.1 586.4,488.0 596.4,482.2 561.8,462.3" fill="#000" opacity="0.17"/>
<polygon points="557.3,464.9 585.3,481.0 585.3,478.6 557.3,462.5" fill="#333"/>
<polygon points="557.3,462.7 585.3,478.8 585.3,476.2 557.3,460.1" fill="#f0f0f0"/>
<polygon points="557.3,460.3 585.3,476.4 585.3,468.1 557.3,452.0" fill="#a4a4a4"/>
<polygon points="585.3,476.4 593.3,471.8 593.3,463.5 585.3,468.1" fill="#b6b6b6"/>
<polygon points="557.3,452.0 585.3,468.1 593.3,463.5 565.3,447.4" fill="#cbcbcb"/>
<polygon points="585.3,479.8 590.9,483.0 590.9,471.3 585.3,468.1" fill="#8e8e8e"/>
<polygon points="590.9,483.0 598.9,478.4 598.9,466.7 590.9,471.3" fill="#b4b4b4"/>
<polygon points="585.3,468.1 590.9,471.3 598.9,466.7 593.3,463.5" fill="#c4c4c4"/>
<polygon points="591.9,473.5 598.1,469.9 598.1,473.6 591.9,477.2" fill="#5c5c5c"/>
<polygon points="591.7,479.2 598.3,475.4 598.3,476.8 591.7,480.6" fill="#4a4a4a"/>
<polygon points="590.9,481.6 598.9,477.0 598.9,478.4 590.9,483.0" fill="#e4e4e4"/>
<ellipse cx="587.8" cy="481.2" rx="1.3" ry="1.6" fill="#2a2a2a"/>
<polygon points="702.4,430.3 737.0,450.2 747.0,444.4 712.4,424.6" fill="#000" opacity="0.17"/>
<polygon points="707.9,427.1 735.9,443.2 735.9,440.8 707.9,424.7" fill="#333"/>
<polygon points="707.9,424.9 735.9,441.0 735.9,438.4 707.9,422.3" fill="#f0f0f0"/>
<polygon points="707.9,422.5 735.9,438.6 735.9,430.3 707.9,414.2" fill="#a4a4a4"/>
<polygon points="735.9,438.6 743.9,434.0 743.9,425.7 735.9,430.3" fill="#b6b6b6"/>
<polygon points="707.9,414.2 735.9,430.3 743.9,425.7 715.9,409.6" fill="#cbcbcb"/>
<polygon points="735.9,442.0 741.5,445.3 741.5,433.6 735.9,430.3" fill="#8e8e8e"/>
<polygon points="741.5,445.3 749.5,440.7 749.5,429.0 741.5,433.6" fill="#b4b4b4"/>
<polygon points="735.9,430.3 741.5,433.6 749.5,429.0 743.9,425.7" fill="#c4c4c4"/>
<polygon points="742.5,435.7 748.7,432.1 748.7,435.8 742.5,439.4" fill="#5c5c5c"/>
<polygon points="742.3,441.4 748.9,437.6 748.9,439.0 742.3,442.8" fill="#4a4a4a"/>
<polygon points="741.5,443.9 749.5,439.3 749.5,440.7 741.5,445.3" fill="#e4e4e4"/>
<ellipse cx="738.4" cy="443.5" rx="1.3" ry="1.6" fill="#2a2a2a"/>
<polygon points="687.2,439.2 721.8,459.1 731.8,453.4 697.2,433.5" fill="#000" opacity="0.17"/>
<polygon points="692.7,436.1 720.7,452.2 720.7,449.8 692.7,433.7" fill="#333"/>
<polygon points="692.7,433.9 720.7,450.0 720.7,447.4 692.7,431.3" fill="#f0f0f0"/>
<polygon points="692.7,431.5 720.7,447.6 720.7,439.3 692.7,423.2" fill="#a4a4a4"/>
<polygon points="720.7,447.6 728.7,443.0 728.7,434.7 720.7,439.3" fill="#b6b6b6"/>
<polygon points="692.7,423.2 720.7,439.3 728.7,434.7 700.7,418.6" fill="#cbcbcb"/>
<polygon points="720.7,451.0 726.3,454.2 726.3,442.5 720.7,439.3" fill="#8e8e8e"/>
<polygon points="726.3,454.2 734.3,449.6 734.3,437.9 726.3,442.5" fill="#b4b4b4"/>
<polygon points="720.7,439.3 726.3,442.5 734.3,437.9 728.7,434.7" fill="#c4c4c4"/>
<polygon points="727.3,444.6 733.5,441.1 733.5,444.8 727.3,448.3" fill="#5c5c5c"/>
<polygon points="727.1,450.3 733.7,446.6 733.7,448.0 727.1,451.7" fill="#4a4a4a"/>
<polygon points="726.3,452.8 734.3,448.2 734.3,449.6 726.3,454.2" fill="#e4e4e4"/>
<ellipse cx="723.2" cy="452.4" rx="1.3" ry="1.6" fill="#2a2a2a"/>
<polygon points="611.2,483.9 645.8,503.8 655.8,498.0 621.2,478.1" fill="#000" opacity="0.17"/>
<polygon points="616.7,480.7 644.7,496.8 644.7,494.4 616.7,478.3" fill="#333"/>
<polygon points="616.7,478.5 644.7,494.6 644.7,492.0 616.7,475.9" fill="#f0f0f0"/>
<polygon points="616.7,476.1 644.7,492.2 644.7,483.9 616.7,467.8" fill="#a4a4a4"/>
<polygon points="644.7,492.2 652.7,487.6 652.7,479.3 644.7,483.9" fill="#b6b6b6"/>
<polygon points="616.7,467.8 644.7,483.9 652.7,479.3 624.7,463.2" fill="#cbcbcb"/>
<polygon points="644.7,495.6 650.3,498.8 650.3,487.1 644.7,483.9" fill="#8e8e8e"/>
<polygon points="650.3,498.8 658.3,494.2 658.3,482.5 650.3,487.1" fill="#b4b4b4"/>
<polygon points="644.7,483.9 650.3,487.1 658.3,482.5 652.7,479.3" fill="#c4c4c4"/>
<polygon points="651.3,489.3 657.5,485.7 657.5,489.4 651.3,493.0" fill="#5c5c5c"/>
<polygon points="651.1,495.0 657.7,491.2 657.7,492.6 651.1,496.4" fill="#4a4a4a"/>
<polygon points="650.3,497.4 658.3,492.8 658.3,494.2 650.3,498.8" fill="#e4e4e4"/>
<ellipse cx="647.2" cy="497.1" rx="1.3" ry="1.6" fill="#2a2a2a"/>
<polygon points="596.0,492.8 630.6,512.7 640.6,507.0 606.0,487.1" fill="#000" opacity="0.17"/>
<polygon points="601.5,489.7 629.5,505.8 629.5,503.4 601.5,487.3" fill="#333"/>
<polygon points="601.5,487.5 629.5,503.6 629.5,501.0 601.5,484.9" fill="#f0f0f0"/>
<polygon points="601.5,485.1 629.5,501.2 629.5,492.9 601.5,476.8" fill="#a4a4a4"/>
<polygon points="629.5,501.2 637.5,496.6 637.5,488.3 629.5,492.9" fill="#b6b6b6"/>
<polygon points="601.5,476.8 629.5,492.9 637.5,488.3 609.5,472.2" fill="#cbcbcb"/>
<polygon points="629.5,504.6 635.1,507.8 635.1,496.1 629.5,492.9" fill="#8e8e8e"/>
<polygon points="635.1,507.8 643.1,503.2 643.1,491.5 635.1,496.1" fill="#b4b4b4"/>
<polygon points="629.5,492.9 635.1,496.1 643.1,491.5 637.5,488.3" fill="#c4c4c4"/>
<polygon points="636.1,498.2 642.3,494.6 642.3,498.3 636.1,501.9" fill="#5c5c5c"/>
<polygon points="635.9,503.9 642.5,500.1 642.5,501.5 635.9,505.3" fill="#4a4a4a"/>
<polygon points="635.1,506.4 643.1,501.8 643.1,503.2 635.1,507.8" fill="#e4e4e4"/>
<ellipse cx="632.0" cy="506.0" rx="1.3" ry="1.6" fill="#2a2a2a"/>
<polygon points="668.0,463.0 674.0,466.4 674.0,463.4 668.0,460.0" fill="#bbb"/>
<polygon points="674.0,466.4 678.0,464.1 678.0,461.1 674.0,463.4" fill="#ccc"/>
<polygon points="668.0,460.0 674.0,463.4 678.0,461.1 672.0,457.7" fill="#e8e8e8"/>
<polygon points="672.0,462.0 681.0,448.0 683.0,449.0 675.0,464.0" fill="#2c2c2c"/>
<polygon points="673.0,482.0 678.0,484.9 678.0,480.9 673.0,478.0" fill="#222"/>
<polygon points="678.0,484.9 683.0,482.0 683.0,478.0 678.0,480.9" fill="#2c2c2c"/>
<polygon points="673.0,478.0 678.0,480.9 683.0,478.0 678.0,475.1" fill="#3a3a3a"/>
<polygon points="678.0,483.5 683.0,486.4 683.0,483.9 678.0,481.0" fill="#bbb"/>
<polygon points="683.0,486.4 688.0,483.5 688.0,481.0 683.0,483.9" fill="#ccc"/>
<polygon points="678.0,481.0 683.0,483.9 688.0,481.0 683.0,478.1" fill="#eee"/>
<polygon points="729.3,474.0 742.3,481.5 775.3,462.5 762.3,455.1" fill="#000" opacity="0.3"/>
<polygon points="764.8,456.7 772.8,461.3 772.8,454.3 764.8,449.7" fill="#a4a4a4"/>
<polygon points="772.8,461.3 777.3,458.8 777.3,451.8 772.8,454.3" fill="#8e8e8e"/>
<polygon points="764.8,449.7 772.8,454.3 777.3,451.8 769.3,447.2" fill="#c8c8c8"/>
<polygon points="743.7,480.0 772.7,463.4 772.7,461.4 743.7,478.0" fill="#222"/>
<polygon points="735.3,475.2 743.7,480.0 743.7,478.0 735.3,473.2" fill="#444"/>
<polygon points="735.3,473.2 743.7,478.0 743.7,468.7 735.3,463.9" fill="#ececec"/>
<polygon points="743.7,478.0 772.7,461.4 772.7,452.1 743.7,468.7" fill="#d4d4d4"/>
<polygon points="735.3,463.9 743.7,468.7 772.7,452.1 764.3,447.2" fill="#f7f7f7"/>
<polygon points="743.7,478.0 772.7,461.4 772.7,459.8 743.7,476.4" fill="#fafafa"/>
<polygon points="746.8,484.8 759.8,492.3 792.8,473.3 779.8,465.9" fill="#000" opacity="0.3"/>
<polygon points="782.3,467.5 790.3,472.1 790.3,465.1 782.3,460.5" fill="#a4a4a4"/>
<polygon points="790.3,472.1 794.8,469.6 794.8,462.6 790.3,465.1" fill="#8e8e8e"/>
<polygon points="782.3,460.5 790.3,465.1 794.8,462.6 786.8,458.0" fill="#c8c8c8"/>
<polygon points="761.2,490.8 790.2,474.2 790.2,472.2 761.2,488.8" fill="#222"/>
<polygon points="752.8,486.0 761.2,490.8 761.2,488.8 752.8,484.0" fill="#444"/>
<polygon points="752.8,484.0 761.2,488.8 761.2,479.5 752.8,474.7" fill="#ececec"/>
<polygon points="761.2,488.8 790.2,472.2 790.2,462.9 761.2,479.5" fill="#d4d4d4"/>
<polygon points="752.8,474.7 761.2,479.5 790.2,462.9 781.8,458.0" fill="#f7f7f7"/>
<polygon points="761.2,488.8 790.2,472.2 790.2,470.6 761.2,487.2" fill="#fafafa"/>
<polygon points="764.3,495.6 777.3,503.1 810.3,484.1 797.3,476.7" fill="#000" opacity="0.3"/>
<polygon points="799.8,478.3 807.8,482.9 807.8,475.9 799.8,471.3" fill="#a4a4a4"/>
<polygon points="807.8,482.9 812.3,480.4 812.3,473.4 807.8,475.9" fill="#8e8e8e"/>
<polygon points="799.8,471.3 807.8,475.9 812.3,473.4 804.3,468.8" fill="#c8c8c8"/>
<polygon points="778.7,501.6 807.7,485.0 807.7,483.0 778.7,499.6" fill="#222"/>
<polygon points="770.3,496.8 778.7,501.6 778.7,499.6 770.3,494.8" fill="#444"/>
<polygon points="770.3,494.8 778.7,499.6 778.7,490.3 770.3,485.5" fill="#ececec"/>
<polygon points="778.7,499.6 807.7,483.0 807.7,473.7 778.7,490.3" fill="#d4d4d4"/>
<polygon points="770.3,485.5 778.7,490.3 807.7,473.7 799.3,468.8" fill="#f7f7f7"/>
<polygon points="778.7,499.6 807.7,483.0 807.7,481.4 778.7,498.0" fill="#fafafa"/>
<polygon points="718.8,526.2 732.3,534.0 767.7,513.6 754.2,505.8" fill="#000" opacity="0.2"/>
<polygon points="739.7,529.7 766.7,514.2 766.7,511.8 739.7,527.3" fill="#333"/>
<polygon points="739.7,527.5 766.7,512.0 766.7,509.4 739.7,524.9" fill="#f0f0f0"/>
<polygon points="731.2,520.2 739.7,525.1 739.7,516.8 731.2,511.9" fill="#b6b6b6"/>
<polygon points="739.7,525.1 766.7,509.6 766.7,501.3 739.7,516.8" fill="#a4a4a4"/>
<polygon points="731.2,511.9 739.7,516.8 766.7,501.3 758.2,496.4" fill="#cbcbcb"/>
<polygon points="724.8,527.3 733.3,532.2 733.3,520.5 724.8,515.6" fill="#b4b4b4"/>
<polygon points="733.3,532.2 739.7,528.5 739.7,516.8 733.3,520.5" fill="#8e8e8e"/>
<polygon points="724.8,515.6 733.3,520.5 739.7,516.8 731.2,511.9" fill="#c4c4c4"/>
<polygon points="725.6,518.8 732.3,522.6 732.3,526.3 725.6,522.5" fill="#5c5c5c"/>
<polygon points="725.5,524.3 732.4,528.3 732.4,529.7 725.5,525.7" fill="#4a4a4a"/>
<polygon points="724.8,525.9 733.3,530.8 733.3,532.2 724.8,527.3" fill="#e4e4e4"/>
<polygon points="790.5,515.2 800.5,521.0 815.5,512.3 805.5,506.6" fill="#000" opacity="0.35"/><polygon points="794.0,515.5 801.0,519.5 801.0,516.5 794.0,512.5" fill="#595959"/>
<polygon points="801.0,519.5 814.0,512.0 814.0,509.0 801.0,516.5" fill="#484848"/>
<polygon points="794.0,512.5 801.0,516.5 814.0,509.0 807.0,505.0" fill="#6e6e6e"/><polygon points="799.0,510.8 804.0,513.7 804.0,511.9 799.0,509.0" fill="#3a3a3a"/>
<polygon points="804.0,513.7 809.5,510.5 809.5,508.7 804.0,511.9" fill="#2c2c2c"/>
<polygon points="799.0,509.0 804.0,511.9 809.5,508.7 804.5,505.8" fill="#7c7c7c"/>
<polygon points="816.0,500.2 826.0,506.0 841.0,497.3 831.0,491.6" fill="#000" opacity="0.35"/><polygon points="819.5,500.5 826.5,504.5 826.5,501.5 819.5,497.5" fill="#595959"/>
<polygon points="826.5,504.5 839.5,497.0 839.5,494.0 826.5,501.5" fill="#484848"/>
<polygon points="819.5,497.5 826.5,501.5 839.5,494.0 832.5,490.0" fill="#6e6e6e"/><polygon points="824.5,495.8 829.5,498.6 829.5,496.8 824.5,494.0" fill="#3a3a3a"/>
<polygon points="829.5,498.6 835.0,495.5 835.0,493.7 829.5,496.8" fill="#2c2c2c"/>
<polygon points="824.5,494.0 829.5,496.8 835.0,493.7 830.0,490.8" fill="#7c7c7c"/>
<polygon points="843.0,516.2 853.0,522.0 868.0,513.3 858.0,507.6" fill="#000" opacity="0.35"/><polygon points="846.5,516.5 853.5,520.5 853.5,517.5 846.5,513.5" fill="#595959"/>
<polygon points="853.5,520.5 866.5,513.0 866.5,510.0 853.5,517.5" fill="#484848"/>
<polygon points="846.5,513.5 853.5,517.5 866.5,510.0 859.5,506.0" fill="#606060"/><polygon points="851.5,511.8 856.5,514.7 856.5,512.9 851.5,510.0" fill="#3a3a3a"/>
<polygon points="856.5,514.7 862.0,511.5 862.0,509.7 856.5,512.9" fill="#2c2c2c"/>
<polygon points="851.5,510.0 856.5,512.9 862.0,509.7 857.0,506.8" fill="#7c7c7c"/>
<polygon points="815.0,531.0 827.0,537.9 853.0,522.9 841.0,516.0" fill="#000" opacity="0.33"/>
<polygon points="823.4,535.4 830.8,539.7 830.8,527.2 823.4,522.9" fill="#bcbcbc" stroke="#ececec" stroke-width="0.7"/>
<polygon points="830.8,539.7 845.1,531.4 845.1,518.9 830.8,527.2" fill="#8a8a8a" stroke="#ececec" stroke-width="0.7"/>
<polygon points="823.4,522.9 830.8,527.2 845.1,518.9 837.7,514.7" fill="#a4a4a4" stroke="#ececec" stroke-width="0.7"/>
<polygon points="816.8,531.5 824.2,535.8 824.2,526.3 816.8,522.0" fill="#e4e4e4"/>
<polygon points="824.2,535.8 830.6,532.1 830.6,522.6 824.2,526.3" fill="#bdbdbd"/>
<polygon points="816.8,522.0 824.2,526.3 830.6,522.6 823.2,518.3" fill="#f0f0f0"/>
<polygon points="817.6,525.5 823.4,528.8 823.4,531.2 817.6,527.9" fill="#555"/>
<polygon points="415.1,479.1 457.0,502.7 457.0,568.5 415.1,546.0" fill="#1b1b1b"/>
<polygon points="415.1,479.1 457.0,502.7 457.0,511.7 415.1,488.1" fill="#a9a9a9"/>
<polygon points="415.1,488.1 457.0,511.7 457.0,514.7 415.1,491.1" fill="#2a2a2a"/>
<polygon points="415.1,491.1 457.0,514.7 457.0,525.7 415.1,502.1" fill="#a2a2a2"/>
<polygon points="419.5,484.5 428.5,489.6 428.5,494.4 419.5,489.3" fill="#e8e8e8"/>
<polygon points="415.1,479.1 418.3,480.9 418.3,548.0 415.1,546.3" fill="#b6b6b6"/>
<polygon points="454.0,523.5 457.5,525.5 457.5,568.5 454.0,566.8" fill="#b0b0b0"/>
<polygon points="457.0,502.7 506.4,474.3 506.4,520.0 457.0,548.0" fill="#2c2c2c"/>
<polygon points="415.1,479.1 464.5,450.7 506.4,474.3 457.0,502.7" fill="#c4c4c4"/>
<polygon points="418.3,479.1 464.5,452.6 503.2,474.3 457.0,500.9" fill="url(#roofg)"/>
<polygon points="431.0,477.5 435.5,475.0 439.5,477.3 435.0,479.9" fill="#e4e4e4"/>
<polygon points="431.0,477.5 435.0,479.9 435.0,481.6 431.0,479.2" fill="#bdbdbd"/>
<polygon points="435.0,479.9 439.5,477.3 439.5,479.0 435.0,481.6" fill="#a0a0a0"/>
<polygon points="468.7,512.0 529.2,545.5 529.2,587.0 468.7,553.0" fill="#1a1a1a"/>
<polygon points="529.2,545.5 619.0,494.0 619.0,528.0 529.2,587.0" fill="#1d1d1d"/>
<polygon points="468.7,512.0 560.7,463.3 619.0,494.0 529.2,545.5" fill="#d0d0d0"/>
<polygon points="472.0,512.0 560.7,465.2 615.7,494.0 529.2,543.7" fill="url(#roofg)"/>
<polygon points="474.0,512.0 560.7,466.3 613.7,494.0 529.2,542.6" fill="#4e4e4e"/>
<line x1="491.9" y1="517.6" x2="505.5" y2="510.6" stroke="#ececec" stroke-width="2.2" />
<line x1="495.8" y1="521.5" x2="509.9" y2="514.1" stroke="#ececec" stroke-width="2.2" />
<line x1="525.8" y1="499.1" x2="539.9" y2="491.5" stroke="#ececec" stroke-width="2.2" />
<line x1="529.3" y1="502.6" x2="543.4" y2="495.0" stroke="#ececec" stroke-width="2.2" />
<line x1="553.0" y1="484.5" x2="567.0" y2="477.0" stroke="#ececec" stroke-width="2.2" />
<line x1="556.5" y1="488.0" x2="570.5" y2="480.5" stroke="#ececec" stroke-width="2.2" />
<polygon points="525.5,535.5 530.0,533.0 534.0,535.3 529.5,537.9" fill="#e4e4e4"/>
<polygon points="525.5,535.5 529.5,537.9 529.5,539.6 525.5,537.2" fill="#bdbdbd"/>
<polygon points="529.5,537.9 534.0,535.3 534.0,537.0 529.5,539.6" fill="#a0a0a0"/>
<polygon points="542.0,563.5 553.5,557.0 553.5,575.0 542.0,581.6" fill="#bdbdbd"/>
<text x="578.5" y="525.5" font-family="Liberation Sans, Arial, sans-serif" font-weight="bold" font-size="6.5" fill="#e8e8e8" transform="skewY(-30)" style="transform-box:fill-box;transform-origin:center">1</text>
<text x="601" y="512.5" font-family="Liberation Sans, Arial, sans-serif" font-weight="bold" font-size="6.5" fill="#e8e8e8" transform="skewY(-30)" style="transform-box:fill-box;transform-origin:center">2</text>
<polygon points="448.0,553.0 481.0,571.5 481.0,589.0 448.0,566.8" fill="#969696"/>
<polygon points="449.4,557.3 467.2,566.3 467.2,575.2 449.4,566.3" fill="#1b1b1b"/>
<polygon points="481.0,571.5 509.0,587.0 509.0,589.5 481.0,588.6" fill="#8c8c8c"/>
<polygon points="448.0,537.5 509.0,570.5 509.0,588.0 448.0,554.0" fill="#8e8e8e"/>
<polygon points="509.0,570.5 525.0,560.0 525.0,577.5 509.0,588.0" fill="#b4b4b4"/>
<polygon points="512.0,572.5 522.5,565.5 522.5,574.5 512.0,581.5" fill="#8a8a8a"/>
<polygon points="450.5,541.0 456.1,544.0 456.1,549.5 450.5,546.5" fill="#6c6c6c"/>
<polygon points="458.6,545.4 464.2,548.4 464.2,553.9 458.6,550.9" fill="#6c6c6c"/>
<polygon points="466.6,549.7 472.3,552.8 472.3,558.3 466.6,555.2" fill="#6c6c6c"/>
<polygon points="474.7,554.1 480.4,557.1 480.4,562.6 474.7,559.6" fill="#6c6c6c"/>
<polygon points="482.8,558.4 488.4,561.5 488.4,567.0 482.8,563.9" fill="#6c6c6c"/>
<polygon points="490.9,562.8 496.5,565.8 496.5,571.3 490.9,568.3" fill="#6c6c6c"/>
<polygon points="498.9,567.1 504.6,570.2 504.6,575.7 498.9,572.6" fill="#6c6c6c"/>
<polygon points="444.5,546.5 508.0,581.0 508.0,588.0 444.5,553.5" fill="#b9b9b9" opacity=".6"/>
<line x1="444.5" y1="546.5" x2="508.0" y2="581.0" stroke="#dcdcdc" stroke-width="0.8" />
<line x1="444.5" y1="553.5" x2="508.0" y2="588.0" stroke="#d2d2d2" stroke-width="1.2" />
<line x1="444.5" y1="546.5" x2="444.5" y2="553.5" stroke="#8a8a8a" stroke-width="0.6" />
<line x1="452.4" y1="550.8" x2="452.4" y2="557.8" stroke="#8a8a8a" stroke-width="0.6" />
<line x1="460.4" y1="555.1" x2="460.4" y2="562.1" stroke="#8a8a8a" stroke-width="0.6" />
<line x1="468.3" y1="559.4" x2="468.3" y2="566.4" stroke="#8a8a8a" stroke-width="0.6" />
<line x1="476.2" y1="563.8" x2="476.2" y2="570.8" stroke="#8a8a8a" stroke-width="0.6" />
<line x1="484.2" y1="568.1" x2="484.2" y2="575.1" stroke="#8a8a8a" stroke-width="0.6" />
<line x1="492.1" y1="572.4" x2="492.1" y2="579.4" stroke="#8a8a8a" stroke-width="0.6" />
<line x1="500.1" y1="576.7" x2="500.1" y2="583.7" stroke="#8a8a8a" stroke-width="0.6" />
<line x1="508.0" y1="581.0" x2="508.0" y2="588.0" stroke="#8a8a8a" stroke-width="0.6" />
<polygon points="445.9,532.5 511.5,566.3 511.5,570.8 445.9,537.0" fill="#b8b8b8"/>
<polygon points="511.5,566.3 526.9,554.5 526.9,559.0 511.5,570.8" fill="#8f8f8f"/>
<polygon points="445.9,532.5 459.0,523.7 526.9,554.5 511.5,566.3" fill="#dcdcdc"/>
<polygon points="411.0,550.5 416.0,548.0 429.0,555.5 424.0,558.0" fill="#8b8b8b" stroke="#d0d0d0" stroke-width="0.7"/>
<polygon points="428.5,560.5 433.5,558.0 446.0,565.3 441.0,567.8" fill="#8b8b8b" stroke="#d0d0d0" stroke-width="0.7"/>
<line x1="486.0" y1="598.6" x2="506.5" y2="598.6" stroke="#a8a8a8" stroke-width="1.2" />
<polygon points="505.5,586.0 508.3,586.0 508.3,599.0 505.5,599.0" fill="#8e8e8e"/>
<polygon points="577.5,541.1 582.0,543.6 582.0,560.6 577.5,558.1" fill="#cfcfcf"/>
<polygon points="572.0,534.6 588.6,523.2 598.4,532.0 581.8,543.2" fill="#d9d9d9"/>
<polygon points="572.0,534.6 581.8,543.2 581.8,546.6 572.0,538.0" fill="#b0b0b0"/>
<polygon points="581.8,543.2 598.4,532.0 598.4,535.4 581.8,546.6" fill="#c2c2c2"/>
<polygon points="600.4,528.7 604.9,531.2 604.9,548.2 600.4,545.7" fill="#cfcfcf"/>
<polygon points="594.9,522.2 611.5,510.8 621.3,519.6 604.7,530.8" fill="#d9d9d9"/>
<polygon points="594.9,522.2 604.7,530.8 604.7,534.2 594.9,525.6" fill="#b0b0b0"/>
<polygon points="604.7,530.8 621.3,519.6 621.3,523.0 604.7,534.2" fill="#c2c2c2"/>
<polygon points="598.5,550.2 634.6,570.9 644.6,565.2 608.5,544.4" fill="#000" opacity="0.17"/>
<polygon points="604.0,547.0 633.5,564.0 633.5,561.6 604.0,544.6" fill="#333"/>
<polygon points="604.0,544.8 633.5,561.8 633.5,559.2 604.0,542.2" fill="#f0f0f0"/>
<polygon points="604.0,542.4 633.5,559.4 633.5,551.1 604.0,534.1" fill="#a4a4a4"/>
<polygon points="633.5,559.4 641.5,554.8 641.5,546.5 633.5,551.1" fill="#b6b6b6"/>
<polygon points="604.0,534.1 633.5,551.1 641.5,546.5 612.0,529.5" fill="#cbcbcb"/>
<polygon points="633.5,562.8 639.1,566.0 639.1,554.3 633.5,551.1" fill="#8e8e8e"/>
<polygon points="639.1,566.0 647.1,561.4 647.1,549.7 639.1,554.3" fill="#b4b4b4"/>
<polygon points="633.5,551.1 639.1,554.3 647.1,549.7 641.5,546.5" fill="#c4c4c4"/>
<polygon points="640.1,556.4 646.3,552.8 646.3,556.5 640.1,560.1" fill="#5c5c5c"/>
<polygon points="639.9,562.1 646.5,558.4 646.5,559.8 639.9,563.5" fill="#4a4a4a"/>
<polygon points="639.1,564.6 647.1,560.0 647.1,561.4 639.1,566.0" fill="#e4e4e4"/>
<ellipse cx="636.0" cy="564.2" rx="1.3" ry="1.6" fill="#2a2a2a"/>
<polygon points="575.7,563.9 611.8,584.6 621.8,578.9 585.7,558.1" fill="#000" opacity="0.17"/>
<polygon points="581.2,560.7 610.7,577.7 610.7,575.3 581.2,558.3" fill="#333"/>
<polygon points="581.2,558.5 610.7,575.5 610.7,572.9 581.2,555.9" fill="#f0f0f0"/>
<polygon points="581.2,556.1 610.7,573.1 610.7,564.8 581.2,547.8" fill="#a4a4a4"/>
<polygon points="610.7,573.1 618.7,568.5 618.7,560.2 610.7,564.8" fill="#b6b6b6"/>
<polygon points="581.2,547.8 610.7,564.8 618.7,560.2 589.2,543.2" fill="#cbcbcb"/>
<polygon points="610.7,576.5 616.3,579.7 616.3,568.0 610.7,564.8" fill="#8e8e8e"/>
<polygon points="616.3,579.7 624.3,575.1 624.3,563.4 616.3,568.0" fill="#b4b4b4"/>
<polygon points="610.7,564.8 616.3,568.0 624.3,563.4 618.7,560.2" fill="#c4c4c4"/>
<polygon points="617.3,570.1 623.5,566.5 623.5,570.2 617.3,573.8" fill="#5c5c5c"/>
<polygon points="617.1,575.8 623.7,572.1 623.7,573.5 617.1,577.2" fill="#4a4a4a"/>
<polygon points="616.3,578.3 624.3,573.7 624.3,575.1 616.3,579.7" fill="#e4e4e4"/>
<ellipse cx="613.2" cy="577.9" rx="1.3" ry="1.6" fill="#2a2a2a"/>
<polygon points="626.5,536.0 630.1,538.1 630.1,533.5 626.5,531.4" fill="#cfcfcf"/>
<polygon points="630.1,538.1 633.7,536.0 633.7,531.4 630.1,533.5" fill="#e2e2e2"/>
<polygon points="626.5,531.4 630.1,533.5 633.7,531.4 630.1,529.3" fill="#f4f4f4"/>
<polygon points="633.5,541.5 637.1,543.6 637.1,539.0 633.5,536.9" fill="#cfcfcf"/>
<polygon points="637.1,543.6 640.7,541.5 640.7,536.9 637.1,539.0" fill="#e2e2e2"/>
<polygon points="633.5,536.9 637.1,539.0 640.7,536.9 637.1,534.8" fill="#f4f4f4"/>
<polygon points="642.6,545.5 646.2,547.6 646.2,543.0 642.6,540.9" fill="#cfcfcf"/>
<polygon points="646.2,547.6 649.8,545.5 649.8,540.9 646.2,543.0" fill="#e2e2e2"/>
<polygon points="642.6,540.9 646.2,543.0 649.8,540.9 646.2,538.8" fill="#f4f4f4"/>
<polygon points="563.0,566.0 566.6,568.1 566.6,563.5 563.0,561.4" fill="#cfcfcf"/>
<polygon points="566.6,568.1 570.2,566.0 570.2,561.4 566.6,563.5" fill="#e2e2e2"/>
<polygon points="563.0,561.4 566.6,563.5 570.2,561.4 566.6,559.3" fill="#f4f4f4"/>
<polygon points="556.0,573.0 559.6,575.1 559.6,570.5 556.0,568.4" fill="#cfcfcf"/>
<polygon points="559.6,575.1 563.2,573.0 563.2,568.4 559.6,570.5" fill="#e2e2e2"/>
<polygon points="556.0,568.4 559.6,570.5 563.2,568.4 559.6,566.3" fill="#f4f4f4"/>
<polygon points="563.0,577.0 566.6,579.1 566.6,574.5 563.0,572.4" fill="#cfcfcf"/>
<polygon points="566.6,579.1 570.2,577.0 570.2,572.4 566.6,574.5" fill="#e2e2e2"/>
<polygon points="563.0,572.4 566.6,574.5 570.2,572.4 566.6,570.3" fill="#f4f4f4"/>
<polygon points="570.0,573.0 573.6,575.1 573.6,570.5 570.0,568.4" fill="#cfcfcf"/>
<polygon points="573.6,575.1 577.2,573.0 577.2,568.4 573.6,570.5" fill="#e2e2e2"/>
<polygon points="570.0,568.4 573.6,570.5 577.2,568.4 573.6,566.3" fill="#f4f4f4"/>
<polygon points="567.0,582.0 570.6,584.1 570.6,579.5 567.0,577.4" fill="#cfcfcf"/>
<polygon points="570.6,584.1 574.2,582.0 574.2,577.4 570.6,579.5" fill="#e2e2e2"/>
<polygon points="567.0,577.4 570.6,579.5 574.2,577.4 570.6,575.3" fill="#f4f4f4"/>
<polygon points="576.0,580.0 579.6,582.1 579.6,577.5 576.0,575.4" fill="#cfcfcf"/>
<polygon points="579.6,582.1 583.2,580.0 583.2,575.4 579.6,577.5" fill="#e2e2e2"/>
<polygon points="576.0,575.4 579.6,577.5 583.2,575.4 579.6,573.3" fill="#f4f4f4"/>
<polygon points="583.0,584.0 586.6,586.1 586.6,581.5 583.0,579.4" fill="#cfcfcf"/>
<polygon points="586.6,586.1 590.2,584.0 590.2,579.4 586.6,581.5" fill="#e2e2e2"/>
<polygon points="583.0,579.4 586.6,581.5 590.2,579.4 586.6,577.3" fill="#f4f4f4"/>
<polygon points="574.0,588.0 577.6,590.1 577.6,585.5 574.0,583.4" fill="#cfcfcf"/>
<polygon points="577.6,590.1 581.2,588.0 581.2,583.4 577.6,585.5" fill="#e2e2e2"/>
<polygon points="574.0,583.4 577.6,585.5 581.2,583.4 577.6,581.3" fill="#f4f4f4"/>
<polygon points="588.0,577.0 591.6,579.1 591.6,574.5 588.0,572.4" fill="#cfcfcf"/>
<polygon points="591.6,579.1 595.2,577.0 595.2,572.4 591.6,574.5" fill="#e2e2e2"/>
<polygon points="588.0,572.4 591.6,574.5 595.2,572.4 591.6,570.3" fill="#f4f4f4"/>
<polygon points="590.0,585.0 593.6,587.1 593.6,582.5 590.0,580.4" fill="#cfcfcf"/>
<polygon points="593.6,587.1 597.2,585.0 597.2,580.4 593.6,582.5" fill="#e2e2e2"/>
<polygon points="590.0,580.4 593.6,582.5 597.2,580.4 593.6,578.3" fill="#f4f4f4"/>
<polygon points="667.0,522.0 674.0,526.0 674.0,521.5 667.0,517.5" fill="#c4c4c4"/>
<polygon points="674.0,526.0 681.0,522.0 681.0,517.5 674.0,521.5" fill="#d8d8d8"/>
<polygon points="667.0,517.5 674.0,521.5 681.0,517.5 674.0,513.5" fill="#ececec"/>
<polygon points="669.0,517.5 673.0,519.8 673.0,513.8 669.0,511.5" fill="#3a3a3a"/>
<polygon points="673.0,519.8 678.0,516.9 678.0,510.9 673.0,513.8" fill="#484848"/>
<polygon points="669.0,511.5 673.0,513.8 678.0,510.9 674.0,508.6" fill="#666"/>
<line x1="663.5" y1="512.0" x2="666.0" y2="528.0" stroke="#444" stroke-width="1" />
<polygon points="566.0,589.0 571.0,591.9 571.0,587.9 566.0,585.0" fill="#333"/>
<polygon points="571.0,591.9 575.0,589.6 575.0,585.6 571.0,587.9" fill="#444"/>
<polygon points="566.0,585.0 571.0,587.9 575.0,585.6 570.0,582.7" fill="#666"/>
<polygon points="573.9,612.7 587.4,620.5 622.4,600.3 608.9,592.6" fill="#000" opacity="0.2"/>
<polygon points="606.9,598.3 615.4,603.2 615.4,591.5 606.9,586.6" fill="#b4b4b4"/>
<polygon points="615.4,603.2 621.4,599.7 621.4,588.0 615.4,591.5" fill="#8e8e8e"/>
<polygon points="606.9,586.6 615.4,591.5 621.4,588.0 612.9,583.1" fill="#c4c4c4"/>
<polygon points="588.4,619.9 615.4,604.4 615.4,602.0 588.4,617.5" fill="#333"/>
<polygon points="588.4,617.7 615.4,602.2 615.4,599.6 588.4,615.1" fill="#f0f0f0"/>
<polygon points="579.9,610.4 588.4,615.3 588.4,607.0 579.9,602.1" fill="#b6b6b6"/>
<polygon points="588.4,615.3 615.4,599.8 615.4,591.5 588.4,607.0" fill="#a4a4a4"/>
<polygon points="579.9,602.1 588.4,607.0 615.4,591.5 606.9,586.6" fill="#cbcbcb"/>
<polygon points="638.4,607.6 672.5,627.2 683.0,621.1 648.9,601.5" fill="#000" opacity="0.17"/>
<polygon points="643.9,604.4 671.4,620.2 671.4,617.8 643.9,602.0" fill="#333"/>
<polygon points="643.9,602.2 671.4,618.0 671.4,615.4 643.9,599.6" fill="#f0f0f0"/>
<polygon points="643.9,599.8 671.4,615.6 671.4,607.3 643.9,591.5" fill="#a4a4a4"/>
<polygon points="671.4,615.6 679.9,610.7 679.9,602.4 671.4,607.3" fill="#b6b6b6"/>
<polygon points="643.9,591.5 671.4,607.3 679.9,602.4 652.4,586.6" fill="#cbcbcb"/>
<polygon points="671.4,619.0 677.0,622.2 677.0,610.5 671.4,607.3" fill="#8e8e8e"/>
<polygon points="677.0,622.2 685.5,617.3 685.5,605.6 677.0,610.5" fill="#b4b4b4"/>
<polygon points="671.4,607.3 677.0,610.5 685.5,605.6 679.9,602.4" fill="#c4c4c4"/>
<polygon points="678.0,612.6 684.6,608.8 684.6,612.5 678.0,616.3" fill="#5c5c5c"/>
<polygon points="677.9,618.3 684.8,614.3 684.8,615.7 677.9,619.7" fill="#4a4a4a"/>
<polygon points="677.0,620.8 685.5,615.9 685.5,617.3 677.0,622.2" fill="#e4e4e4"/>
<ellipse cx="673.9" cy="620.5" rx="1.3" ry="1.6" fill="#2a2a2a"/>
<polygon points="629.0,630.2 659.0,647.5 671.0,640.6 641.0,623.4" fill="#000" opacity="0.3"/>
<polygon points="633.0,629.1 660.0,644.6 660.0,642.6 633.0,627.1" fill="#222"/>
<polygon points="633.0,627.1 660.0,642.6 660.0,635.1 633.0,619.6" fill="#dcdcdc"/>
<polygon points="660.0,642.6 670.5,636.6 670.5,629.1 660.0,635.1" fill="#ebebeb"/>
<polygon points="633.0,619.6 660.0,635.1 670.5,629.1 643.5,613.6" fill="#f6f6f6"/>
<polygon points="617.2,637.9 647.2,655.2 659.2,648.3 629.2,631.0" fill="#000" opacity="0.3"/>
<polygon points="621.2,636.8 648.2,652.3 648.2,650.3 621.2,634.8" fill="#222"/>
<polygon points="621.2,634.8 648.2,650.3 648.2,642.8 621.2,627.3" fill="#dcdcdc"/>
<polygon points="648.2,650.3 658.7,644.3 658.7,636.8 648.2,642.8" fill="#ebebeb"/>
<polygon points="621.2,627.3 648.2,642.8 658.7,636.8 631.7,621.3" fill="#f6f6f6"/>
<line x1="530.0" y1="589.4" x2="645.0" y2="654.5" stroke="#e6e6e6" stroke-width="1" />
<polygon points="541.0,626.0 555.0,618.2 598.5,642.0 584.5,650.0" fill="#b4b4b4"/>
<path d="M525.0 627.5 a9.5 5.2 0 0 1 17 -4 l-4 6 z" fill="#9e9e9e"/>
<line x1="542.0" y1="626.5" x2="554.8" y2="627.0" stroke="#a4a4a4" stroke-width="1.8" />
<line x1="554.8" y1="627.0" x2="554.8" y2="612.3" stroke="#b8b8b8" stroke-width="2.4" />
<circle cx="555.0" cy="604.3" r="10.8" fill="url(#sph2)"/>
<path d="M549.5 640.5 a9.5 5.2 0 0 1 17 -4 l-4 6 z" fill="#9e9e9e"/>
<line x1="566.5" y1="639.5" x2="579.2" y2="640.0" stroke="#a4a4a4" stroke-width="1.8" />
<line x1="579.2" y1="640.0" x2="579.2" y2="625.1" stroke="#b8b8b8" stroke-width="2.4" />
<circle cx="579.5" cy="617.1" r="10.8" fill="url(#sph2)"/>
<line x1="774.0" y1="600.4" x2="905.5" y2="525.8" stroke="#a7a7a7" stroke-width="10.5" stroke-linecap="round"/>
<polygon points="761.4,593.8 897.4,516.3 897.4,508.1 761.4,585.6" fill="#959595"/>
<line x1="763.1" y1="592.9" x2="763.1" y2="585.3" stroke="#c2c2c2" stroke-width="1.5" />
<line x1="766.4" y1="591.0" x2="766.4" y2="583.4" stroke="#c2c2c2" stroke-width="1.5" />
<line x1="769.7" y1="589.1" x2="769.7" y2="581.5" stroke="#c2c2c2" stroke-width="1.5" />
<line x1="773.0" y1="587.2" x2="773.0" y2="579.6" stroke="#c2c2c2" stroke-width="1.5" />
<line x1="776.3" y1="585.3" x2="776.3" y2="577.7" stroke="#c2c2c2" stroke-width="1.5" />
<line x1="779.6" y1="583.4" x2="779.6" y2="575.8" stroke="#c2c2c2" stroke-width="1.5" />
<line x1="783.0" y1="581.5" x2="783.0" y2="573.9" stroke="#c2c2c2" stroke-width="1.5" />
<line x1="786.3" y1="579.6" x2="786.3" y2="572.0" stroke="#c2c2c2" stroke-width="1.5" />
<line x1="789.6" y1="577.7" x2="789.6" y2="570.1" stroke="#c2c2c2" stroke-width="1.5" />
<line x1="792.9" y1="575.8" x2="792.9" y2="568.2" stroke="#c2c2c2" stroke-width="1.5" />
<line x1="796.2" y1="574.0" x2="796.2" y2="566.4" stroke="#c2c2c2" stroke-width="1.5" />
<line x1="799.5" y1="572.1" x2="799.5" y2="564.5" stroke="#c2c2c2" stroke-width="1.5" />
<line x1="802.9" y1="570.2" x2="802.9" y2="562.6" stroke="#c2c2c2" stroke-width="1.5" />
<line x1="806.2" y1="568.3" x2="806.2" y2="560.7" stroke="#c2c2c2" stroke-width="1.5" />
<line x1="809.5" y1="566.4" x2="809.5" y2="558.8" stroke="#c2c2c2" stroke-width="1.5" />
<line x1="812.8" y1="564.5" x2="812.8" y2="556.9" stroke="#c2c2c2" stroke-width="1.5" />
<line x1="816.1" y1="562.6" x2="816.1" y2="555.0" stroke="#c2c2c2" stroke-width="1.5" />
<line x1="819.4" y1="560.7" x2="819.4" y2="553.1" stroke="#c2c2c2" stroke-width="1.5" />
<line x1="822.8" y1="558.8" x2="822.8" y2="551.2" stroke="#c2c2c2" stroke-width="1.5" />
<line x1="826.1" y1="556.9" x2="826.1" y2="549.3" stroke="#c2c2c2" stroke-width="1.5" />
<line x1="829.4" y1="555.0" x2="829.4" y2="547.4" stroke="#c2c2c2" stroke-width="1.5" />
<line x1="832.7" y1="553.2" x2="832.7" y2="545.6" stroke="#c2c2c2" stroke-width="1.5" />
<line x1="836.0" y1="551.3" x2="836.0" y2="543.7" stroke="#c2c2c2" stroke-width="1.5" />
<line x1="839.4" y1="549.4" x2="839.4" y2="541.8" stroke="#c2c2c2" stroke-width="1.5" />
<line x1="842.7" y1="547.5" x2="842.7" y2="539.9" stroke="#c2c2c2" stroke-width="1.5" />
<line x1="846.0" y1="545.6" x2="846.0" y2="538.0" stroke="#c2c2c2" stroke-width="1.5" />
<line x1="849.3" y1="543.7" x2="849.3" y2="536.1" stroke="#c2c2c2" stroke-width="1.5" />
<line x1="852.6" y1="541.8" x2="852.6" y2="534.2" stroke="#c2c2c2" stroke-width="1.5" />
<line x1="855.9" y1="539.9" x2="855.9" y2="532.3" stroke="#c2c2c2" stroke-width="1.5" />
<line x1="859.3" y1="538.0" x2="859.3" y2="530.4" stroke="#c2c2c2" stroke-width="1.5" />
<line x1="862.6" y1="536.1" x2="862.6" y2="528.5" stroke="#c2c2c2" stroke-width="1.5" />
<line x1="865.9" y1="534.3" x2="865.9" y2="526.7" stroke="#c2c2c2" stroke-width="1.5" />
<line x1="869.2" y1="532.4" x2="869.2" y2="524.8" stroke="#c2c2c2" stroke-width="1.5" />
<line x1="872.5" y1="530.5" x2="872.5" y2="522.9" stroke="#c2c2c2" stroke-width="1.5" />
<line x1="875.8" y1="528.6" x2="875.8" y2="521.0" stroke="#c2c2c2" stroke-width="1.5" />
<line x1="879.2" y1="526.7" x2="879.2" y2="519.1" stroke="#c2c2c2" stroke-width="1.5" />
<line x1="882.5" y1="524.8" x2="882.5" y2="517.2" stroke="#c2c2c2" stroke-width="1.5" />
<line x1="885.8" y1="522.9" x2="885.8" y2="515.3" stroke="#c2c2c2" stroke-width="1.5" />
<line x1="889.1" y1="521.0" x2="889.1" y2="513.4" stroke="#c2c2c2" stroke-width="1.5" />
<line x1="892.4" y1="519.1" x2="892.4" y2="511.5" stroke="#c2c2c2" stroke-width="1.5" />
<line x1="895.7" y1="517.2" x2="895.7" y2="509.6" stroke="#c2c2c2" stroke-width="1.5" />
<line x1="761.4" y1="585.6" x2="897.4" y2="508.1" stroke="#b8b8b8" stroke-width="0.7" />
<circle cx="778.7" cy="595.5" r="3.9" fill="url(#sph)"/>
<circle cx="788.9" cy="590.1" r="3.9" fill="url(#sph)"/>
<circle cx="799.0" cy="584.5" r="3.9" fill="url(#sph)"/>
<circle cx="809.0" cy="578.7" r="3.9" fill="url(#sph)"/>
<circle cx="819.2" cy="572.8" r="3.9" fill="url(#sph)"/>
<circle cx="829.4" cy="567.0" r="3.9" fill="url(#sph)"/>
<circle cx="839.6" cy="561.2" r="3.9" fill="url(#sph)"/>
<circle cx="849.8" cy="555.4" r="3.9" fill="url(#sph)"/>
<circle cx="859.8" cy="549.8" r="3.9" fill="url(#sph)"/>
<circle cx="869.8" cy="543.9" r="3.9" fill="url(#sph)"/>
<circle cx="880.0" cy="538.1" r="3.9" fill="url(#sph)"/>
<circle cx="890.2" cy="532.0" r="3.9" fill="url(#sph)"/>
<circle cx="900.8" cy="526.3" r="3.9" fill="url(#sph)"/>
<line x1="636.0" y1="680.0" x2="694.5" y2="646.2" stroke="#a7a7a7" stroke-width="10.5" stroke-linecap="round"/>
<polygon points="616.3,674.3 684.9,635.0 684.9,627.0 616.3,666.3" fill="#959595"/>
<line x1="617.9" y1="673.4" x2="617.9" y2="666.0" stroke="#c2c2c2" stroke-width="1.5" />
<line x1="621.2" y1="671.5" x2="621.2" y2="664.1" stroke="#c2c2c2" stroke-width="1.5" />
<line x1="624.5" y1="669.6" x2="624.5" y2="662.2" stroke="#c2c2c2" stroke-width="1.5" />
<line x1="627.7" y1="667.8" x2="627.7" y2="660.4" stroke="#c2c2c2" stroke-width="1.5" />
<line x1="631.0" y1="665.9" x2="631.0" y2="658.5" stroke="#c2c2c2" stroke-width="1.5" />
<line x1="634.3" y1="664.0" x2="634.3" y2="656.6" stroke="#c2c2c2" stroke-width="1.5" />
<line x1="637.5" y1="662.1" x2="637.5" y2="654.7" stroke="#c2c2c2" stroke-width="1.5" />
<line x1="640.8" y1="660.3" x2="640.8" y2="652.9" stroke="#c2c2c2" stroke-width="1.5" />
<line x1="644.1" y1="658.4" x2="644.1" y2="651.0" stroke="#c2c2c2" stroke-width="1.5" />
<line x1="647.3" y1="656.5" x2="647.3" y2="649.1" stroke="#c2c2c2" stroke-width="1.5" />
<line x1="650.6" y1="654.6" x2="650.6" y2="647.2" stroke="#c2c2c2" stroke-width="1.5" />
<line x1="653.9" y1="652.8" x2="653.9" y2="645.4" stroke="#c2c2c2" stroke-width="1.5" />
<line x1="657.1" y1="650.9" x2="657.1" y2="643.5" stroke="#c2c2c2" stroke-width="1.5" />
<line x1="660.4" y1="649.0" x2="660.4" y2="641.6" stroke="#c2c2c2" stroke-width="1.5" />
<line x1="663.7" y1="647.2" x2="663.7" y2="639.8" stroke="#c2c2c2" stroke-width="1.5" />
<line x1="666.9" y1="645.3" x2="666.9" y2="637.9" stroke="#c2c2c2" stroke-width="1.5" />
<line x1="670.2" y1="643.4" x2="670.2" y2="636.0" stroke="#c2c2c2" stroke-width="1.5" />
<line x1="673.5" y1="641.5" x2="673.5" y2="634.1" stroke="#c2c2c2" stroke-width="1.5" />
<line x1="676.7" y1="639.7" x2="676.7" y2="632.3" stroke="#c2c2c2" stroke-width="1.5" />
<line x1="680.0" y1="637.8" x2="680.0" y2="630.4" stroke="#c2c2c2" stroke-width="1.5" />
<line x1="683.3" y1="635.9" x2="683.3" y2="628.5" stroke="#c2c2c2" stroke-width="1.5" />
<line x1="616.3" y1="666.3" x2="684.9" y2="627.0" stroke="#b8b8b8" stroke-width="0.7" />
<circle cx="640.1" cy="675.4" r="3.9" fill="url(#sph)"/>
<circle cx="650.3" cy="669.4" r="3.9" fill="url(#sph)"/>
<circle cx="661.1" cy="663.8" r="3.9" fill="url(#sph)"/>
<circle cx="670.6" cy="657.7" r="3.9" fill="url(#sph)"/>
<circle cx="680.7" cy="651.9" r="3.9" fill="url(#sph)"/>
<circle cx="690.5" cy="646.3" r="3.9" fill="url(#sph)"/>
<polygon points="696.0,613.2 711.2,621.9 711.2,603.3 696.0,594.6" fill="#cbcbcb"/>
<polygon points="711.2,621.9 734.8,608.4 734.8,589.8 711.2,603.3" fill="#ececec"/>
<polygon points="714.5,619.0 731.0,609.5 731.0,597.0 714.5,606.5" fill="#7c7c7c"/>
<polygon points="714.5,611.0 731.0,601.5 731.0,597.0 714.5,606.5" fill="#5c5c5c"/>
<polygon points="701.0,616.1 705.1,618.4 705.1,609.9 701.0,607.6" fill="#7a7a7a"/>
<polygon points="696.0,594.6 711.2,603.3 734.8,589.8 719.6,581.0" fill="#e9e9e9"/>
<polygon points="696.0,594.6 711.2,603.3 711.2,604.9 696.0,596.2" fill="#dcdcdc"/>
<polygon points="711.2,603.3 734.8,589.8 734.8,591.4 711.2,604.9" fill="#f6f6f6"/>
<line x1="737.7" y1="602.4" x2="757.3" y2="591.1" stroke="#d0d0d0" stroke-width="1" />
<line x1="757.3" y1="591.1" x2="757.3" y2="595.0" stroke="#d0d0d0" stroke-width="1" />
<line x1="728.9" y1="617.0" x2="728.9" y2="632.8" stroke="#8a8a8a" stroke-width="1.1" />
<circle cx="729.4" cy="621.5" r="3.4" fill="url(#sph)"/>
<circle cx="738.7" cy="616.1" r="3.4" fill="url(#sph)"/>
<rect x="723" y="607.8" width="4" height="8.5" fill="#0e0e0e"/><rect x="733.6" y="607.8" width="3.8" height="8.8" fill="#0e0e0e"/><rect x="726.8" y="609.5" width="7" height="6.8" fill="#2a2a2a"/>
<rect x="683.5" y="531.5" width="18" height="17" fill="none" stroke="#0a0a0a" stroke-width="1.2"/>
<polygon points="401.5,521.7 423.7,530.7 424.3,529.3 402.5,519.3" fill="#b5a55c"/>
<polygon points="460.9,510.6 467.3,520.9 468.7,520.1 463.1,509.4" fill="#b5a55c"/>
<polygon points="491.6,539.2 502.8,542.3 503.2,540.7 492.4,536.8" fill="#b5a55c"/>
<polygon points="566.7,484.3 581.8,487.8 582.2,486.2 567.3,481.7" fill="#b5a55c"/>
<polygon points="717.1,592.8 729.5,606.5 730.5,605.5 718.9,591.2" fill="#b5a55c"/>
<polygon points="615.3,367.0 669.9,372.1 670.1,370.9 615.7,363.0" fill="#16386e"/>
<polygon points="648.2,388.5 706.4,394.6 706.6,393.4 648.8,384.5" fill="#16386e"/>
<line x1="671.0" y1="374.0" x2="671.0" y2="382.0" stroke="#9a9a9a" stroke-width="1" />
<line x1="706.8" y1="397.0" x2="706.8" y2="405.0" stroke="#9a9a9a" stroke-width="1" />
<polygon points="672.5,368.9 676.0,365.4 685.0,370.1 681.5,373.7" fill="#f2a81d"/>
<polygon points="672.5,368.9 681.5,373.7 681.5,375.5 672.5,370.7" fill="#d8d8d8"/>
<polygon points="681.5,373.7 685.0,370.1 685.0,371.9 681.5,375.5" fill="#8a8a8a"/>
<rect x="668.4" y="369.3" width="5.2" height="5.2" fill="#f4f4f4" stroke="#9ab" stroke-width=".5"/>
<polygon points="708.8,391.3 712.3,387.8 721.3,392.5 717.8,396.1" fill="#f2a81d"/>
<polygon points="708.8,391.3 717.8,396.1 717.8,397.9 708.8,393.1" fill="#d8d8d8"/>
<polygon points="717.8,396.1 721.3,392.5 721.3,394.3 717.8,397.9" fill="#8a8a8a"/>
<rect x="704.7" y="391.7" width="5.2" height="5.2" fill="#f4f4f4" stroke="#9ab" stroke-width=".5"/>
<path d="M417.8 538.5 v-4.5 a7.6 6.5 0 0 1 15.2 0 v4.5 a7.6 3 0 0 1 -15.2 0 z" fill="#f3a91e"/>
<path d="M419.4 538.1 a6 7 0 0 0 12 0 a6 2.2 0 0 0 -12 0 z" fill="#17171d" stroke="#f0f0f0" stroke-width="1"/>
<ellipse cx="425.4" cy="540.5" rx="2.8" ry="2.4" fill="#34343f"/>
<path d="M496.3 550.0 v-4.5 a7.6 6.5 0 0 1 15.2 0 v4.5 a7.6 3 0 0 1 -15.2 0 z" fill="#f3a91e"/>
<path d="M497.9 549.6 a6 7 0 0 0 12 0 a6 2.2 0 0 0 -12 0 z" fill="#17171d" stroke="#f0f0f0" stroke-width="1"/>
<ellipse cx="503.9" cy="552.0" rx="2.8" ry="2.4" fill="#34343f"/>
<path d="M460.5 527 a7 5 0 0 1 14 0 v2.5 h-14 z" fill="#f2a81d"/>
<ellipse cx="583.2" cy="491.6" rx="8.8" ry="3.6" fill="#e8e8e8"/><path d="M574.2 489 a9 3.6 0 0 1 18 0 v2 a9 3.6 0 0 1 -18 0 z" fill="#f2a81d"/><ellipse cx="583.2" cy="493.8" rx="5" ry="1.2" fill="#334"/>
<rect x="423.4" y="527.8" width="5.2" height="5.2" fill="#f8f8f8" stroke="#c9c4a8" stroke-width=".5"/>
<rect x="465.4" y="518.4" width="5.2" height="5.2" fill="#f8f8f8" stroke="#c9c4a8" stroke-width=".5"/>
<rect x="501.6" y="539.2" width="5.2" height="5.2" fill="#f8f8f8" stroke="#c9c4a8" stroke-width=".5"/>
<rect x="581.1" y="484.6" width="5.2" height="5.2" fill="#f8f8f8" stroke="#c9c4a8" stroke-width=".5"/>
<rect x="728.2" y="604.4" width="5.2" height="5.2" fill="#f8f8f8" stroke="#c9c4a8" stroke-width=".5"/>
<rect x="372" y="505.5" width="30.6" height="17.5" fill="#d3cba3"/><text x="387.6" y="516.9" text-anchor="middle" font-family="Liberation Sans, Arial, sans-serif" font-size="13" fill="#3a382e" letter-spacing="0.6">C13</text>
<rect x="434" y="493" width="31.6" height="17.6" fill="#d3cba3"/><text x="450.1" y="504.5" text-anchor="middle" font-family="Liberation Sans, Arial, sans-serif" font-size="13" fill="#3a382e" letter-spacing="0.6">C10</text>
<rect x="461.7" y="524.7" width="31" height="17.4" fill="#d3cba3"/><text x="477.5" y="536.0" text-anchor="middle" font-family="Liberation Sans, Arial, sans-serif" font-size="13" fill="#3a382e" letter-spacing="0.6">C14</text>
<rect x="535.3" y="468.8" width="31.8" height="19" fill="#d3cba3"/><text x="551.4999999999999" y="481.7" text-anchor="middle" font-family="Liberation Sans, Arial, sans-serif" font-size="13" fill="#3a382e" letter-spacing="0.6">C12</text>
<rect x="693.5" y="575.3" width="30.8" height="17.2" fill="#d3cba3"/><text x="709.1999999999999" y="586.4" text-anchor="middle" font-family="Liberation Sans, Arial, sans-serif" font-size="13" fill="#3a382e" letter-spacing="0.6">C11</text>
<rect x="583" y="352.6" width="32.5" height="18.4" fill="#86aee6"/><text x="599.55" y="364.9" text-anchor="middle" font-family="Liberation Sans, Arial, sans-serif" font-size="13" fill="#1c2430" letter-spacing="0.6">C16</text>
<rect x="617" y="375" width="31.6" height="18" fill="#86aee6"/><text x="633.0999999999999" y="386.9" text-anchor="middle" font-family="Liberation Sans, Arial, sans-serif" font-size="13" fill="#1c2430" letter-spacing="0.6">C15</text>
</svg><!--MAPEND-->
</div>
<div id="right">
<div class="abs" style="left:0;top:0;width:450px;height:36px;background:#1c1c1c"></div>
<div class="abs" style="left:0;top:0;width:97px;height:36px;background:#282828"></div>
<div class="tab" style="left:21px;top:10px;letter-spacing:-.15px">Properties</div>
<div class="tab" style="left:117px;top:10px;letter-spacing:.05px">Find / Add</div>
<div class="tab" style="left:215.5px;top:10px;letter-spacing:.05px">Object properties</div>
<div class="hd" style="left:25px;top:59.5px">Map name</div>
<div class="lbl" style="left:25px;top:96px">Industry &amp; SME_TEST</div>
<div class="hd" style="left:25px;top:133.5px">Map image</div>
<div class="inp" style="left:25px;top:164px;width:362px;height:24px;padding:5px 0 0 7px;color:#fff">Industry &amp; SME 1_acac8db9-2248-41fe-8c4a-ccd08458b567_3.PNG</div>
<div class="lbl y" style="left:399px;top:169px">Load</div>
<div class="hd" style="left:25px;top:200.5px">Zoom levels</div>
<div class="lbl" style="left:25px;top:236px">Min Zoom Scale</div>
<div class="inp" style="left:190px;top:230px;width:197px;height:24px;padding:5px 0 0 7px;color:#fff">0.2</div>
<div class="lbl y" style="left:399px;top:236px">Apply</div>
<div class="lbl" style="left:25px;top:272px">Max Zoom Scale</div>
<div class="inp" style="left:190px;top:266px;width:197px;height:24px;padding:5px 0 0 7px;color:#fff">1.5</div>
<div class="lbl y" style="left:399px;top:272px">Apply</div>
<div class="lbl" style="left:25px;top:308px">Default Zoom Scale</div>
<div class="inp" style="left:190px;top:302px;width:197px;height:24px;padding:5px 0 0 7px;color:#fff">0.4</div>
<div class="lbl y" style="left:399px;top:308px">Apply</div>
<div class="lbl" style="left:25px;top:344px">Zoom factor</div>
<div class="inp" style="left:190px;top:338px;width:197px;height:24px;padding:5px 0 0 7px;color:#fff">0.1</div>
<div class="lbl" style="left:25px;top:380px">Zoom out map</div>
<div class="inp" style="left:25.5px;top:406px;width:361px;height:22px;padding:5px 0 0 7px;color:#fff">(None)</div>
<div class="arr d" style="left:374.5px;top:414px;border-width:6px 3.25px 0 3.25px"></div>
<div class="hd" style="left:25px;top:453.5px">Parameters</div>
<div class="lbl" style="left:25px;top:490px">Hide camera labels</div>
<div class="abs" style="left:190px;top:485px;width:34px;height:17px;background:#000;border:1px solid #dcdcdc;border-radius:1.5px"><div class="abs" style="left:2px;top:2.5px;width:12.5px;height:10px;background:#fff"></div></div>
<div class="lbl" style="left:25px;top:522px">Show tooltips of map objects</div>
<div class="abs" style="left:190.5px;top:518px;width:32.5px;height:15px;background:#8fb331;border:1px solid #7c9c28;border-radius:1px"><div class="abs" style="right:1px;top:1px;width:13.5px;height:11px;background:#fff;border-radius:1.5px"></div></div>
<div class="lbl" style="left:25px;top:553px">Block resize</div>
<div class="abs" style="left:190px;top:549px;width:34px;height:17px;background:#000;border:1px solid #dcdcdc;border-radius:1.5px"><div class="abs" style="left:2px;top:2.5px;width:12.5px;height:10px;background:#fff"></div></div>
<div class="lbl" style="left:25px;top:585px">Show overlay grid</div>
<div class="abs" style="left:190px;top:581px;width:34px;height:17px;background:#000;border:1px solid #dcdcdc;border-radius:1.5px"><div class="abs" style="left:2px;top:2.5px;width:12.5px;height:10px;background:#fff"></div></div>
<div class="lbl" style="left:25px;top:617px">Grid size</div>
<div class="inp" style="left:190px;top:611px;width:197px;height:24px;padding:5px 0 0 7px;color:#6b6b6b">20</div>
<div class="lbl" style="left:25px;top:665px">Add MO with camera</div>
<div class="abs" style="left:190.5px;top:661px;width:32.5px;height:15px;background:#8fb331;border:1px solid #7c9c28;border-radius:1px"><div class="abs" style="right:1px;top:1px;width:13.5px;height:11px;background:#fff;border-radius:1.5px"></div></div>
<div class="lbl" style="left:25px;top:697px">Create map object</div>
<div class="abs" style="left:190.5px;top:693px;width:32.5px;height:15px;background:#8fb331;border:1px solid #7c9c28;border-radius:1px"><div class="abs" style="right:1px;top:1px;width:13.5px;height:11px;background:#fff;border-radius:1.5px"></div></div>
</div>
<div id="far"></div>
<div class="yb" style="left:323px;top:33px;width:624px;height:727px"></div>
<div class="yb" style="left:955px;top:33px;width:450px;height:727px"></div>
<svg class="abs" style="left:1405px;top:33px" width="22" height="24" viewBox="0 0 22 24"><path d="M2.5 1.5 L22 21 M22 1.5 L2.5 21" stroke="#ececec" stroke-width="2.6" fill="none"/></svg>
<div class="circ" style="left:884px;top:53px">1</div>
<div class="circ" style="left:1343px;top:52px">2</div>
</body>
</html>
